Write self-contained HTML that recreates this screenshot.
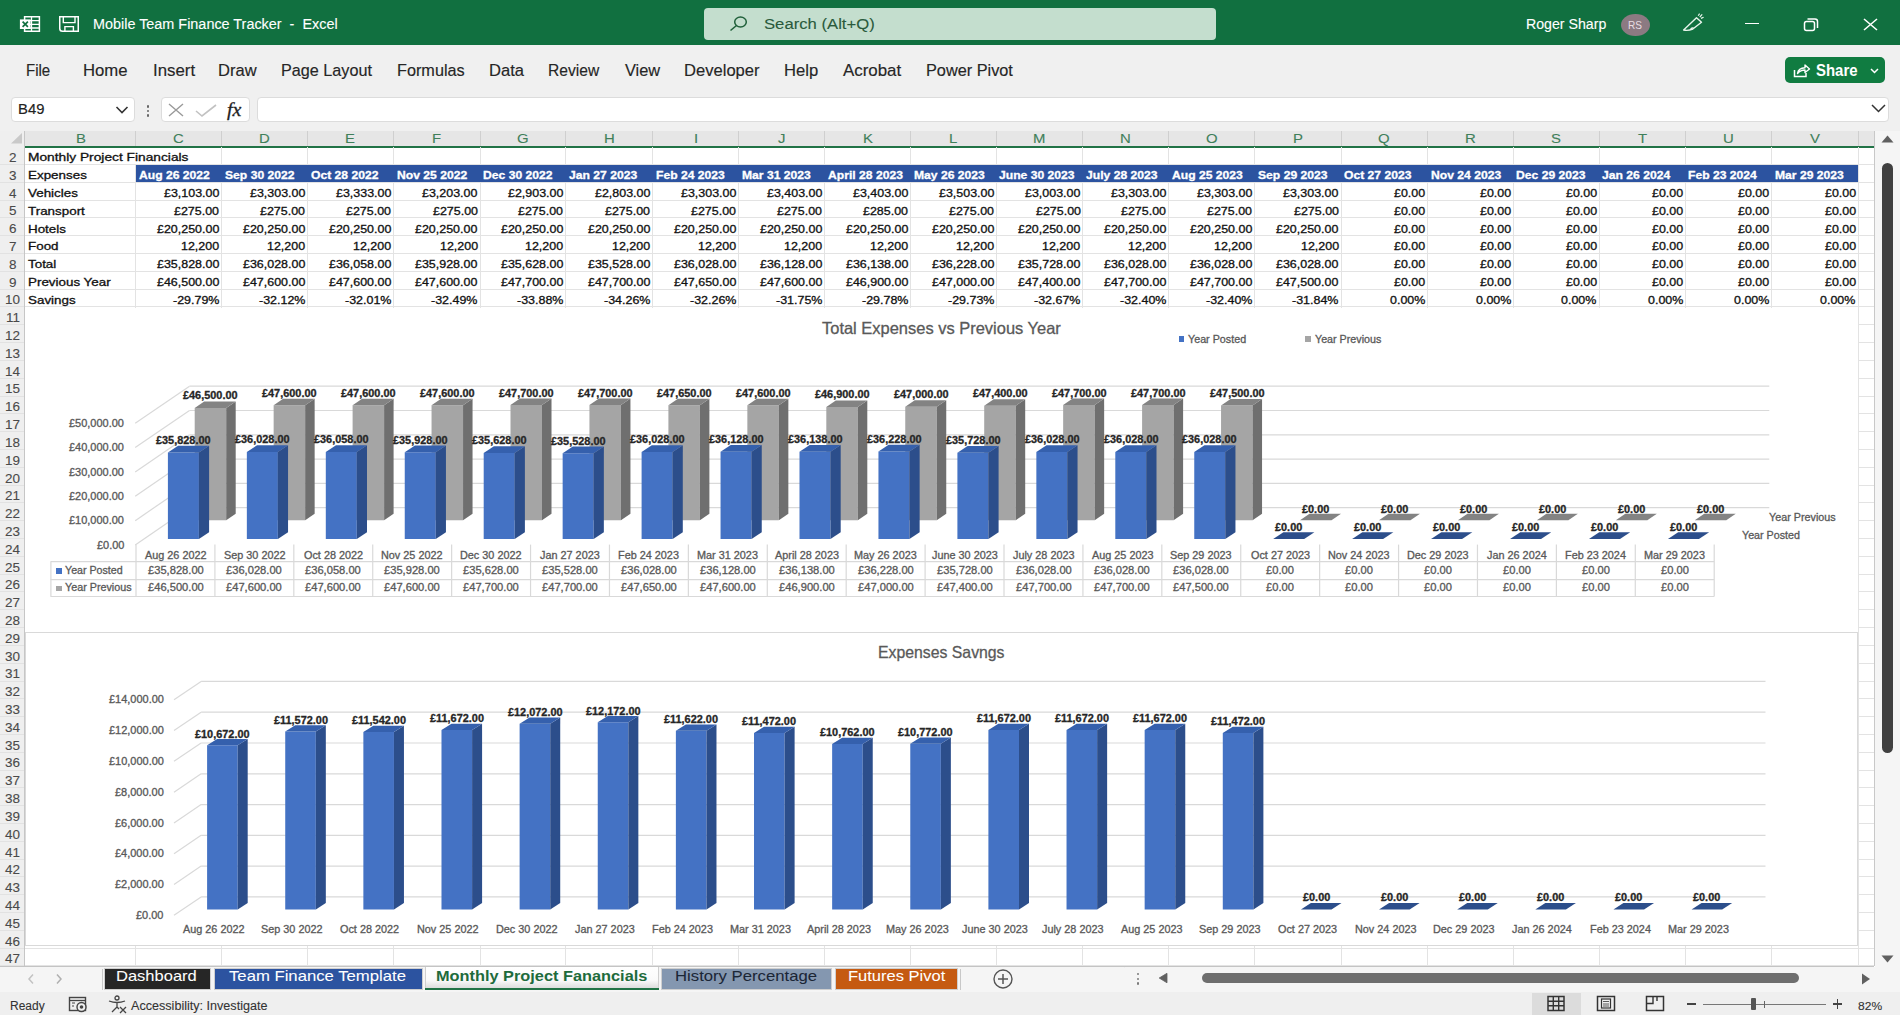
<!DOCTYPE html><html><head><meta charset="utf-8"><title>Excel</title><style>
html,body{margin:0;padding:0;width:1900px;height:1015px;overflow:hidden;background:#fff;position:relative}
body{font-family:"Liberation Sans",sans-serif}
.t{position:absolute;white-space:pre;line-height:1;transform-origin:0 0;-webkit-text-stroke:0.3px currentColor}
.r{position:absolute}
svg{position:absolute}
</style></head><body>
<div class="r" style="left:0.00px;top:0.00px;width:1900.00px;height:44.50px;background:#117040;"></div>
<svg style="left:18px;top:14px" width="24" height="20" viewBox="0 0 24 20">
<rect x="6.6" y="2.75" width="14.8" height="14.5" fill="none" stroke="#fff" stroke-width="1.5"/>
<path d="M13.5 2.75 V17.25 M6.6 6.6 H21.4 M6.6 10.4 H21.4 M6.6 14 H21.4" stroke="#fff" stroke-width="1.3"/>
<rect x="1.9" y="5.4" width="10.7" height="9.6" fill="#fff"/>
<path d="M4.6 7.6 L9.9 12.9 M9.9 7.6 L4.6 12.9" stroke="#117040" stroke-width="1.7"/>
</svg>
<svg style="left:57px;top:14px" width="24" height="20" viewBox="0 0 24 20">
<path d="M2.75 2.75 H21.25 V17.25 H5.5 Q2.75 17.25 2.75 14.5 Z" fill="none" stroke="#fff" stroke-width="1.5"/>
<path d="M6.3 2.75 V8.6 H18 V2.75" fill="none" stroke="#fff" stroke-width="1.4"/>
<path d="M7.9 17.25 V12.6 H16.4 V17.25" fill="none" stroke="#fff" stroke-width="1.4"/>
</svg>
<div class="t" style="left:93.40px;top:18.26px;font-size:13.81px;color:#fff;transform:scaleX(1.0437);-webkit-text-stroke:0.1px currentColor;">Mobile Team Finance Tracker  -  Excel</div>
<div class="r" style="left:703.60px;top:8.00px;width:512.00px;height:31.80px;background:#c4dece;border-radius:4px;"></div>
<svg style="left:728px;top:15px" width="22" height="18" viewBox="0 0 22 18">
<ellipse cx="12.5" cy="7" rx="5.8" ry="5" fill="none" stroke="#20603a" stroke-width="1.5"/>
<line x1="8.5" y1="10.5" x2="2.5" y2="15.5" stroke="#20603a" stroke-width="1.6"/></svg>
<div class="t" style="left:763.90px;top:16.03px;font-size:15.26px;color:#2a5a3c;transform:scaleX(1.0932);-webkit-text-stroke:0.1px currentColor;">Search (Alt+Q)</div>
<div class="t" style="left:1526.30px;top:18.36px;font-size:13.81px;color:#fff;transform:scaleX(1.0270);-webkit-text-stroke:0.1px currentColor;">Roger Sharp</div>
<div class="r" style="left:1620.5px;top:13.7px;width:29px;height:22.5px;border-radius:50%;background:#8c7a82"></div>
<div class="t" style="left:1628.00px;top:20.26px;font-size:11.34px;color:#e8dde2;transform:scaleX(0.8889);-webkit-text-stroke:0px currentColor;">RS</div>
<svg style="left:1680px;top:12px" width="26" height="22" viewBox="0 0 26 22">
<path d="M3.6 18 L16.5 5.8 L21.5 10.2 L12.8 17 Q8 19.2 3.6 18 Z" fill="none" stroke="#e8f5ec" stroke-width="1.4" stroke-linejoin="round"/>
<path d="M10.5 17.6 Q11.5 15.2 13.6 16.2" fill="none" stroke="#e8f5ec" stroke-width="1.3"/>
<path d="M18.2 3.8 L19.6 1.6 M21 6.4 L23.6 5.2 M19.8 5 L22.2 2.4" stroke="#e8f5ec" stroke-width="1.2"/>
</svg>
<div class="r" style="left:1745.00px;top:22.50px;width:13.50px;height:1.50px;background:#fff;"></div>
<svg style="left:1802px;top:17px" width="18" height="15" viewBox="0 0 18 15">
<rect x="2.5" y="4.5" width="10" height="9" rx="2" fill="none" stroke="#fff" stroke-width="1.5"/>
<path d="M5.5 2 H13 Q15.5 2 15.5 4.5 V11" fill="none" stroke="#fff" stroke-width="1.5"/></svg>
<svg style="left:1862px;top:18px" width="17" height="13" viewBox="0 0 17 13">
<path d="M2 1 L15 12 M15 1 L2 12" stroke="#fff" stroke-width="1.6"/></svg>
<div class="r" style="left:0.00px;top:44.50px;width:1900.00px;height:52.00px;background:#f0f0f0;"></div>
<div class="t" style="left:26.10px;top:63.21px;font-size:15.99px;color:#262626;transform:scaleX(0.9394);-webkit-text-stroke:0.15px currentColor;">File</div>
<div class="t" style="left:83.30px;top:63.21px;font-size:15.99px;color:#262626;transform:scaleX(1.0458);-webkit-text-stroke:0.15px currentColor;">Home</div>
<div class="t" style="left:152.60px;top:63.21px;font-size:15.99px;color:#262626;transform:scaleX(1.0529);-webkit-text-stroke:0.15px currentColor;">Insert</div>
<div class="t" style="left:218.00px;top:63.21px;font-size:15.99px;color:#262626;transform:scaleX(1.0346);-webkit-text-stroke:0.15px currentColor;">Draw</div>
<div class="t" style="left:281.40px;top:63.21px;font-size:15.99px;color:#262626;transform:scaleX(1.0125);-webkit-text-stroke:0.15px currentColor;">Page Layout</div>
<div class="t" style="left:397.00px;top:63.21px;font-size:15.99px;color:#262626;transform:scaleX(1.0161);-webkit-text-stroke:0.15px currentColor;">Formulas</div>
<div class="t" style="left:488.80px;top:63.21px;font-size:15.99px;color:#262626;transform:scaleX(1.0364);-webkit-text-stroke:0.15px currentColor;">Data</div>
<div class="t" style="left:548.40px;top:63.21px;font-size:15.99px;color:#262626;transform:scaleX(0.9767);-webkit-text-stroke:0.15px currentColor;">Review</div>
<div class="t" style="left:624.60px;top:63.21px;font-size:15.99px;color:#262626;transform:scaleX(1.0243);-webkit-text-stroke:0.15px currentColor;">View</div>
<div class="t" style="left:684.00px;top:63.21px;font-size:15.99px;color:#262626;transform:scaleX(1.0374);-webkit-text-stroke:0.15px currentColor;">Developer</div>
<div class="t" style="left:783.70px;top:63.21px;font-size:15.99px;color:#262626;transform:scaleX(1.0401);-webkit-text-stroke:0.15px currentColor;">Help</div>
<div class="t" style="left:842.60px;top:63.21px;font-size:15.99px;color:#262626;transform:scaleX(1.0563);-webkit-text-stroke:0.15px currentColor;">Acrobat</div>
<div class="t" style="left:925.60px;top:63.21px;font-size:15.99px;color:#262626;transform:scaleX(1.0187);-webkit-text-stroke:0.15px currentColor;">Power Pivot</div>
<div class="r" style="left:1785.10px;top:57.10px;width:100.10px;height:26.40px;background:#107c41;border-radius:5px;"></div>
<svg style="left:1793px;top:63px" width="18" height="15" viewBox="0 0 18 15">
<path d="M1.5 7 V13.5 H13 V10" fill="none" stroke="#fff" stroke-width="1.5"/>
<path d="M4.5 10.5 Q5.5 5 12 4.8 V2 L16.5 6 L12 9.5 V7 Q7.5 7 4.5 10.5 Z" fill="none" stroke="#fff" stroke-width="1.4" stroke-linejoin="round"/></svg>
<div class="t" style="left:1815.70px;top:63.01px;font-size:15.99px;font-weight:bold;color:#fff;transform:scaleX(0.9339);-webkit-text-stroke:0px currentColor;">Share</div>
<svg style="left:1869px;top:67px" width="11" height="8" viewBox="0 0 11 8"><path d="M2 2 L5.5 5.5 L9 2" fill="none" stroke="#fff" stroke-width="1.5"/></svg>
<div class="r" style="left:0.00px;top:96.50px;width:1900.00px;height:34.00px;background:#f0f0f0;"></div>
<div class="r" style="left:10.80px;top:96.80px;width:124.20px;height:25.60px;background:#fff;border:1px solid #dcdcdc;border-radius:4px;box-sizing:border-box;"></div>
<div class="t" style="left:17.60px;top:103.36px;font-size:13.81px;color:#222;transform:scaleX(1.0746);-webkit-text-stroke:0.15px currentColor;">B49</div>
<svg style="left:114px;top:104px" width="16" height="12" viewBox="0 0 16 12"><path d="M2.5 3 L8 8.5 L13.5 3" fill="none" stroke="#333" stroke-width="1.6"/></svg>
<div class="r" style="left:146.60px;top:105.00px;width:2.60px;height:2.60px;background:#666;border-radius:50%;"></div>
<div class="r" style="left:146.60px;top:109.50px;width:2.60px;height:2.60px;background:#666;border-radius:50%;"></div>
<div class="r" style="left:146.60px;top:114.00px;width:2.60px;height:2.60px;background:#666;border-radius:50%;"></div>
<div class="r" style="left:160.60px;top:96.80px;width:89.50px;height:25.60px;background:#fff;border:1px solid #dcdcdc;border-radius:4px;box-sizing:border-box;"></div>
<svg style="left:166px;top:102px" width="82" height="16" viewBox="0 0 82 16">
<path d="M3 2 L17 14 M17 2 L3 14" stroke="#9a9a9a" stroke-width="1.4"/>
<path d="M30 9 L36 14 L50 3" fill="none" stroke="#c2c2c2" stroke-width="1.6"/>
</svg>
<div class="t" style="left:227px;top:100px;font-family:'Liberation Serif',serif;font-style:italic;font-size:19px;color:#222;transform:scaleX(1.05)">fx</div>
<div class="r" style="left:257.20px;top:96.80px;width:1632.00px;height:25.60px;background:#fff;border:1px solid #dcdcdc;border-radius:4px;box-sizing:border-box;"></div>
<svg style="left:1870px;top:103px" width="17" height="11" viewBox="0 0 17 11"><path d="M2 2 L8.5 8.5 L15 2" fill="none" stroke="#333" stroke-width="1.5"/></svg>
<div class="r" style="left:25.30px;top:147.80px;width:1849.10px;height:818.20px;background:#fff;"></div>
<div class="r" style="left:0.00px;top:130.50px;width:1874.40px;height:16.00px;background:#e6e6e6;"></div>
<div class="r" style="left:0.00px;top:130.50px;width:25.30px;height:835.50px;background:#efefef;"></div>
<svg style="left:10px;top:132px" width="13" height="12" viewBox="0 0 13 12"><path d="M12 1 V11.5 H1 Z" fill="#c9c9c9"/></svg>
<div class="r" style="left:135.20px;top:130.50px;width:1.00px;height:16.00px;background:#cfcfcf;"></div>
<div class="t" style="left:75.53px;top:132.80px;font-size:12.94px;color:#3f7f5a;transform:scaleX(1.1531);-webkit-text-stroke:0.1px currentColor;">B</div>
<div class="r" style="left:221.10px;top:130.50px;width:1.00px;height:16.00px;background:#cfcfcf;"></div>
<div class="t" style="left:173.26px;top:132.80px;font-size:12.94px;color:#3f7f5a;transform:scaleX(1.1531);-webkit-text-stroke:0.1px currentColor;">C</div>
<div class="r" style="left:307.00px;top:130.50px;width:1.00px;height:16.00px;background:#cfcfcf;"></div>
<div class="t" style="left:259.16px;top:132.80px;font-size:12.94px;color:#3f7f5a;transform:scaleX(1.1531);-webkit-text-stroke:0.1px currentColor;">D</div>
<div class="r" style="left:392.90px;top:130.50px;width:1.00px;height:16.00px;background:#cfcfcf;"></div>
<div class="t" style="left:345.48px;top:132.80px;font-size:12.94px;color:#3f7f5a;transform:scaleX(1.1531);-webkit-text-stroke:0.1px currentColor;">E</div>
<div class="r" style="left:479.50px;top:130.50px;width:1.00px;height:16.00px;background:#cfcfcf;"></div>
<div class="t" style="left:432.14px;top:132.80px;font-size:12.94px;color:#3f7f5a;transform:scaleX(1.1531);-webkit-text-stroke:0.1px currentColor;">F</div>
<div class="r" style="left:565.30px;top:130.50px;width:1.00px;height:16.00px;background:#cfcfcf;"></div>
<div class="t" style="left:517.10px;top:132.80px;font-size:12.94px;color:#3f7f5a;transform:scaleX(1.1531);-webkit-text-stroke:0.1px currentColor;">G</div>
<div class="r" style="left:652.30px;top:130.50px;width:1.00px;height:16.00px;background:#cfcfcf;"></div>
<div class="t" style="left:603.91px;top:132.80px;font-size:12.94px;color:#3f7f5a;transform:scaleX(1.1531);-webkit-text-stroke:0.1px currentColor;">H</div>
<div class="r" style="left:738.20px;top:130.50px;width:1.00px;height:16.00px;background:#cfcfcf;"></div>
<div class="t" style="left:693.68px;top:132.80px;font-size:12.94px;color:#3f7f5a;transform:scaleX(1.1531);-webkit-text-stroke:0.1px currentColor;">I</div>
<div class="r" style="left:824.10px;top:130.50px;width:1.00px;height:16.00px;background:#cfcfcf;"></div>
<div class="t" style="left:777.92px;top:132.80px;font-size:12.94px;color:#3f7f5a;transform:scaleX(1.1531);-webkit-text-stroke:0.1px currentColor;">J</div>
<div class="r" style="left:910.00px;top:130.50px;width:1.00px;height:16.00px;background:#cfcfcf;"></div>
<div class="t" style="left:862.58px;top:132.80px;font-size:12.94px;color:#3f7f5a;transform:scaleX(1.1531);-webkit-text-stroke:0.1px currentColor;">K</div>
<div class="r" style="left:995.80px;top:130.50px;width:1.00px;height:16.00px;background:#cfcfcf;"></div>
<div class="t" style="left:949.25px;top:132.80px;font-size:12.94px;color:#3f7f5a;transform:scaleX(1.1531);-webkit-text-stroke:0.1px currentColor;">L</div>
<div class="r" style="left:1082.40px;top:130.50px;width:1.00px;height:16.00px;background:#cfcfcf;"></div>
<div class="t" style="left:1033.39px;top:132.80px;font-size:12.94px;color:#3f7f5a;transform:scaleX(1.1531);-webkit-text-stroke:0.1px currentColor;">M</div>
<div class="r" style="left:1168.30px;top:130.50px;width:1.00px;height:16.00px;background:#cfcfcf;"></div>
<div class="t" style="left:1120.46px;top:132.80px;font-size:12.94px;color:#3f7f5a;transform:scaleX(1.1531);-webkit-text-stroke:0.1px currentColor;">N</div>
<div class="r" style="left:1254.20px;top:130.50px;width:1.00px;height:16.00px;background:#cfcfcf;"></div>
<div class="t" style="left:1205.95px;top:132.80px;font-size:12.94px;color:#3f7f5a;transform:scaleX(1.1531);-webkit-text-stroke:0.1px currentColor;">O</div>
<div class="r" style="left:1340.50px;top:130.50px;width:1.00px;height:16.00px;background:#cfcfcf;"></div>
<div class="t" style="left:1292.88px;top:132.80px;font-size:12.94px;color:#3f7f5a;transform:scaleX(1.1531);-webkit-text-stroke:0.1px currentColor;">P</div>
<div class="r" style="left:1427.00px;top:130.50px;width:1.00px;height:16.00px;background:#cfcfcf;"></div>
<div class="t" style="left:1378.45px;top:132.80px;font-size:12.94px;color:#3f7f5a;transform:scaleX(1.1531);-webkit-text-stroke:0.1px currentColor;">Q</div>
<div class="r" style="left:1512.80px;top:130.50px;width:1.00px;height:16.00px;background:#cfcfcf;"></div>
<div class="t" style="left:1465.01px;top:132.80px;font-size:12.94px;color:#3f7f5a;transform:scaleX(1.1531);-webkit-text-stroke:0.1px currentColor;">R</div>
<div class="r" style="left:1598.50px;top:130.50px;width:1.00px;height:16.00px;background:#cfcfcf;"></div>
<div class="t" style="left:1551.18px;top:132.80px;font-size:12.94px;color:#3f7f5a;transform:scaleX(1.1531);-webkit-text-stroke:0.1px currentColor;">S</div>
<div class="r" style="left:1684.70px;top:130.50px;width:1.00px;height:16.00px;background:#cfcfcf;"></div>
<div class="t" style="left:1637.54px;top:132.80px;font-size:12.94px;color:#3f7f5a;transform:scaleX(1.1531);-webkit-text-stroke:0.1px currentColor;">T</div>
<div class="r" style="left:1771.20px;top:130.50px;width:1.00px;height:16.00px;background:#cfcfcf;"></div>
<div class="t" style="left:1723.06px;top:132.80px;font-size:12.94px;color:#3f7f5a;transform:scaleX(1.1531);-webkit-text-stroke:0.1px currentColor;">U</div>
<div class="r" style="left:1857.50px;top:130.50px;width:1.00px;height:16.00px;background:#cfcfcf;"></div>
<div class="t" style="left:1809.88px;top:132.80px;font-size:12.94px;color:#3f7f5a;transform:scaleX(1.1531);-webkit-text-stroke:0.1px currentColor;">V</div>
<div class="r" style="left:25.30px;top:146.00px;width:1849.10px;height:2.00px;background:#217346;"></div>
<div class="r" style="left:24.30px;top:130.50px;width:1.20px;height:835.50px;background:#c6c6c6;"></div>
<div class="r" style="left:0.00px;top:164.01px;width:24.30px;height:1.00px;background:#e2e2e2;"></div>
<div class="r" style="left:25.30px;top:164.01px;width:1849.10px;height:1.00px;background:#e3e3e3;"></div>
<div class="r" style="left:0.00px;top:181.82px;width:24.30px;height:1.00px;background:#e2e2e2;"></div>
<div class="r" style="left:25.30px;top:181.82px;width:1849.10px;height:1.00px;background:#e3e3e3;"></div>
<div class="r" style="left:0.00px;top:199.63px;width:24.30px;height:1.00px;background:#e2e2e2;"></div>
<div class="r" style="left:25.30px;top:199.63px;width:1849.10px;height:1.00px;background:#e3e3e3;"></div>
<div class="r" style="left:0.00px;top:217.44px;width:24.30px;height:1.00px;background:#e2e2e2;"></div>
<div class="r" style="left:25.30px;top:217.44px;width:1849.10px;height:1.00px;background:#e3e3e3;"></div>
<div class="r" style="left:0.00px;top:235.25px;width:24.30px;height:1.00px;background:#e2e2e2;"></div>
<div class="r" style="left:25.30px;top:235.25px;width:1849.10px;height:1.00px;background:#e3e3e3;"></div>
<div class="r" style="left:0.00px;top:253.06px;width:24.30px;height:1.00px;background:#e2e2e2;"></div>
<div class="r" style="left:25.30px;top:253.06px;width:1849.10px;height:1.00px;background:#e3e3e3;"></div>
<div class="r" style="left:0.00px;top:270.87px;width:24.30px;height:1.00px;background:#e2e2e2;"></div>
<div class="r" style="left:25.30px;top:270.87px;width:1849.10px;height:1.00px;background:#e3e3e3;"></div>
<div class="r" style="left:0.00px;top:288.68px;width:24.30px;height:1.00px;background:#e2e2e2;"></div>
<div class="r" style="left:25.30px;top:288.68px;width:1849.10px;height:1.00px;background:#e3e3e3;"></div>
<div class="r" style="left:0.00px;top:306.49px;width:24.30px;height:1.00px;background:#e2e2e2;"></div>
<div class="r" style="left:25.30px;top:306.49px;width:1849.10px;height:1.00px;background:#e3e3e3;"></div>
<div class="r" style="left:0.00px;top:324.30px;width:24.30px;height:1.00px;background:#e2e2e2;"></div>
<div class="r" style="left:25.30px;top:324.30px;width:1849.10px;height:1.00px;background:#e3e3e3;"></div>
<div class="r" style="left:0.00px;top:342.11px;width:24.30px;height:1.00px;background:#e2e2e2;"></div>
<div class="r" style="left:25.30px;top:342.11px;width:1849.10px;height:1.00px;background:#e3e3e3;"></div>
<div class="r" style="left:0.00px;top:359.92px;width:24.30px;height:1.00px;background:#e2e2e2;"></div>
<div class="r" style="left:25.30px;top:359.92px;width:1849.10px;height:1.00px;background:#e3e3e3;"></div>
<div class="r" style="left:0.00px;top:377.73px;width:24.30px;height:1.00px;background:#e2e2e2;"></div>
<div class="r" style="left:25.30px;top:377.73px;width:1849.10px;height:1.00px;background:#e3e3e3;"></div>
<div class="r" style="left:0.00px;top:395.54px;width:24.30px;height:1.00px;background:#e2e2e2;"></div>
<div class="r" style="left:25.30px;top:395.54px;width:1849.10px;height:1.00px;background:#e3e3e3;"></div>
<div class="r" style="left:0.00px;top:413.35px;width:24.30px;height:1.00px;background:#e2e2e2;"></div>
<div class="r" style="left:25.30px;top:413.35px;width:1849.10px;height:1.00px;background:#e3e3e3;"></div>
<div class="r" style="left:0.00px;top:431.16px;width:24.30px;height:1.00px;background:#e2e2e2;"></div>
<div class="r" style="left:25.30px;top:431.16px;width:1849.10px;height:1.00px;background:#e3e3e3;"></div>
<div class="r" style="left:0.00px;top:448.97px;width:24.30px;height:1.00px;background:#e2e2e2;"></div>
<div class="r" style="left:25.30px;top:448.97px;width:1849.10px;height:1.00px;background:#e3e3e3;"></div>
<div class="r" style="left:0.00px;top:466.78px;width:24.30px;height:1.00px;background:#e2e2e2;"></div>
<div class="r" style="left:25.30px;top:466.78px;width:1849.10px;height:1.00px;background:#e3e3e3;"></div>
<div class="r" style="left:0.00px;top:484.59px;width:24.30px;height:1.00px;background:#e2e2e2;"></div>
<div class="r" style="left:25.30px;top:484.59px;width:1849.10px;height:1.00px;background:#e3e3e3;"></div>
<div class="r" style="left:0.00px;top:502.40px;width:24.30px;height:1.00px;background:#e2e2e2;"></div>
<div class="r" style="left:25.30px;top:502.40px;width:1849.10px;height:1.00px;background:#e3e3e3;"></div>
<div class="r" style="left:0.00px;top:520.21px;width:24.30px;height:1.00px;background:#e2e2e2;"></div>
<div class="r" style="left:25.30px;top:520.21px;width:1849.10px;height:1.00px;background:#e3e3e3;"></div>
<div class="r" style="left:0.00px;top:538.02px;width:24.30px;height:1.00px;background:#e2e2e2;"></div>
<div class="r" style="left:25.30px;top:538.02px;width:1849.10px;height:1.00px;background:#e3e3e3;"></div>
<div class="r" style="left:0.00px;top:555.83px;width:24.30px;height:1.00px;background:#e2e2e2;"></div>
<div class="r" style="left:25.30px;top:555.83px;width:1849.10px;height:1.00px;background:#e3e3e3;"></div>
<div class="r" style="left:0.00px;top:573.64px;width:24.30px;height:1.00px;background:#e2e2e2;"></div>
<div class="r" style="left:25.30px;top:573.64px;width:1849.10px;height:1.00px;background:#e3e3e3;"></div>
<div class="r" style="left:0.00px;top:591.45px;width:24.30px;height:1.00px;background:#e2e2e2;"></div>
<div class="r" style="left:25.30px;top:591.45px;width:1849.10px;height:1.00px;background:#e3e3e3;"></div>
<div class="r" style="left:0.00px;top:609.26px;width:24.30px;height:1.00px;background:#e2e2e2;"></div>
<div class="r" style="left:25.30px;top:609.26px;width:1849.10px;height:1.00px;background:#e3e3e3;"></div>
<div class="r" style="left:0.00px;top:627.07px;width:24.30px;height:1.00px;background:#e2e2e2;"></div>
<div class="r" style="left:25.30px;top:627.07px;width:1849.10px;height:1.00px;background:#e3e3e3;"></div>
<div class="r" style="left:0.00px;top:644.88px;width:24.30px;height:1.00px;background:#e2e2e2;"></div>
<div class="r" style="left:25.30px;top:644.88px;width:1849.10px;height:1.00px;background:#e3e3e3;"></div>
<div class="r" style="left:0.00px;top:662.69px;width:24.30px;height:1.00px;background:#e2e2e2;"></div>
<div class="r" style="left:25.30px;top:662.69px;width:1849.10px;height:1.00px;background:#e3e3e3;"></div>
<div class="r" style="left:0.00px;top:680.50px;width:24.30px;height:1.00px;background:#e2e2e2;"></div>
<div class="r" style="left:25.30px;top:680.50px;width:1849.10px;height:1.00px;background:#e3e3e3;"></div>
<div class="r" style="left:0.00px;top:698.31px;width:24.30px;height:1.00px;background:#e2e2e2;"></div>
<div class="r" style="left:25.30px;top:698.31px;width:1849.10px;height:1.00px;background:#e3e3e3;"></div>
<div class="r" style="left:0.00px;top:716.12px;width:24.30px;height:1.00px;background:#e2e2e2;"></div>
<div class="r" style="left:25.30px;top:716.12px;width:1849.10px;height:1.00px;background:#e3e3e3;"></div>
<div class="r" style="left:0.00px;top:733.93px;width:24.30px;height:1.00px;background:#e2e2e2;"></div>
<div class="r" style="left:25.30px;top:733.93px;width:1849.10px;height:1.00px;background:#e3e3e3;"></div>
<div class="r" style="left:0.00px;top:751.74px;width:24.30px;height:1.00px;background:#e2e2e2;"></div>
<div class="r" style="left:25.30px;top:751.74px;width:1849.10px;height:1.00px;background:#e3e3e3;"></div>
<div class="r" style="left:0.00px;top:769.55px;width:24.30px;height:1.00px;background:#e2e2e2;"></div>
<div class="r" style="left:25.30px;top:769.55px;width:1849.10px;height:1.00px;background:#e3e3e3;"></div>
<div class="r" style="left:0.00px;top:787.36px;width:24.30px;height:1.00px;background:#e2e2e2;"></div>
<div class="r" style="left:25.30px;top:787.36px;width:1849.10px;height:1.00px;background:#e3e3e3;"></div>
<div class="r" style="left:0.00px;top:805.17px;width:24.30px;height:1.00px;background:#e2e2e2;"></div>
<div class="r" style="left:25.30px;top:805.17px;width:1849.10px;height:1.00px;background:#e3e3e3;"></div>
<div class="r" style="left:0.00px;top:822.98px;width:24.30px;height:1.00px;background:#e2e2e2;"></div>
<div class="r" style="left:25.30px;top:822.98px;width:1849.10px;height:1.00px;background:#e3e3e3;"></div>
<div class="r" style="left:0.00px;top:840.79px;width:24.30px;height:1.00px;background:#e2e2e2;"></div>
<div class="r" style="left:25.30px;top:840.79px;width:1849.10px;height:1.00px;background:#e3e3e3;"></div>
<div class="r" style="left:0.00px;top:858.60px;width:24.30px;height:1.00px;background:#e2e2e2;"></div>
<div class="r" style="left:25.30px;top:858.60px;width:1849.10px;height:1.00px;background:#e3e3e3;"></div>
<div class="r" style="left:0.00px;top:876.41px;width:24.30px;height:1.00px;background:#e2e2e2;"></div>
<div class="r" style="left:25.30px;top:876.41px;width:1849.10px;height:1.00px;background:#e3e3e3;"></div>
<div class="r" style="left:0.00px;top:894.22px;width:24.30px;height:1.00px;background:#e2e2e2;"></div>
<div class="r" style="left:25.30px;top:894.22px;width:1849.10px;height:1.00px;background:#e3e3e3;"></div>
<div class="r" style="left:0.00px;top:912.03px;width:24.30px;height:1.00px;background:#e2e2e2;"></div>
<div class="r" style="left:25.30px;top:912.03px;width:1849.10px;height:1.00px;background:#e3e3e3;"></div>
<div class="r" style="left:0.00px;top:929.84px;width:24.30px;height:1.00px;background:#e2e2e2;"></div>
<div class="r" style="left:25.30px;top:929.84px;width:1849.10px;height:1.00px;background:#e3e3e3;"></div>
<div class="r" style="left:0.00px;top:947.65px;width:24.30px;height:1.00px;background:#e2e2e2;"></div>
<div class="r" style="left:25.30px;top:947.65px;width:1849.10px;height:1.00px;background:#e3e3e3;"></div>
<div class="r" style="left:0.00px;top:965.46px;width:24.30px;height:1.00px;background:#e2e2e2;"></div>
<div class="r" style="left:25.30px;top:965.46px;width:1849.10px;height:1.00px;background:#e3e3e3;"></div>
<div class="r" style="left:135.20px;top:164.51px;width:1.00px;height:801.49px;background:#e3e3e3;"></div>
<div class="r" style="left:221.10px;top:146.70px;width:1.00px;height:819.30px;background:#e3e3e3;"></div>
<div class="r" style="left:307.00px;top:146.70px;width:1.00px;height:819.30px;background:#e3e3e3;"></div>
<div class="r" style="left:392.90px;top:146.70px;width:1.00px;height:819.30px;background:#e3e3e3;"></div>
<div class="r" style="left:479.50px;top:146.70px;width:1.00px;height:819.30px;background:#e3e3e3;"></div>
<div class="r" style="left:565.30px;top:146.70px;width:1.00px;height:819.30px;background:#e3e3e3;"></div>
<div class="r" style="left:652.30px;top:146.70px;width:1.00px;height:819.30px;background:#e3e3e3;"></div>
<div class="r" style="left:738.20px;top:146.70px;width:1.00px;height:819.30px;background:#e3e3e3;"></div>
<div class="r" style="left:824.10px;top:146.70px;width:1.00px;height:819.30px;background:#e3e3e3;"></div>
<div class="r" style="left:910.00px;top:146.70px;width:1.00px;height:819.30px;background:#e3e3e3;"></div>
<div class="r" style="left:995.80px;top:146.70px;width:1.00px;height:819.30px;background:#e3e3e3;"></div>
<div class="r" style="left:1082.40px;top:146.70px;width:1.00px;height:819.30px;background:#e3e3e3;"></div>
<div class="r" style="left:1168.30px;top:146.70px;width:1.00px;height:819.30px;background:#e3e3e3;"></div>
<div class="r" style="left:1254.20px;top:146.70px;width:1.00px;height:819.30px;background:#e3e3e3;"></div>
<div class="r" style="left:1340.50px;top:146.70px;width:1.00px;height:819.30px;background:#e3e3e3;"></div>
<div class="r" style="left:1427.00px;top:146.70px;width:1.00px;height:819.30px;background:#e3e3e3;"></div>
<div class="r" style="left:1512.80px;top:146.70px;width:1.00px;height:819.30px;background:#e3e3e3;"></div>
<div class="r" style="left:1598.50px;top:146.70px;width:1.00px;height:819.30px;background:#e3e3e3;"></div>
<div class="r" style="left:1684.70px;top:146.70px;width:1.00px;height:819.30px;background:#e3e3e3;"></div>
<div class="r" style="left:1771.20px;top:146.70px;width:1.00px;height:819.30px;background:#e3e3e3;"></div>
<div class="r" style="left:1857.50px;top:146.70px;width:1.00px;height:819.30px;background:#e3e3e3;"></div>
<div class="r" style="left:1873.90px;top:146.70px;width:1.00px;height:819.30px;background:#e3e3e3;"></div>
<div class="r" style="left:1873.80px;top:130.50px;width:1.20px;height:835.50px;background:#c8c8c8;"></div>
<div class="r" style="left:0.00px;top:965.50px;width:1874.40px;height:1.00px;background:#c4c4c4;"></div>
<div class="t" style="left:8.85px;top:151.92px;font-size:12.21px;color:#4a4a4a;transform:scaleX(1.1050);-webkit-text-stroke:0.1px currentColor;">2</div>
<div class="t" style="left:8.85px;top:169.73px;font-size:12.21px;color:#4a4a4a;transform:scaleX(1.1050);-webkit-text-stroke:0.1px currentColor;">3</div>
<div class="t" style="left:8.85px;top:187.54px;font-size:12.21px;color:#4a4a4a;transform:scaleX(1.1050);-webkit-text-stroke:0.1px currentColor;">4</div>
<div class="t" style="left:8.85px;top:205.35px;font-size:12.21px;color:#4a4a4a;transform:scaleX(1.1050);-webkit-text-stroke:0.1px currentColor;">5</div>
<div class="t" style="left:8.85px;top:223.16px;font-size:12.21px;color:#4a4a4a;transform:scaleX(1.1050);-webkit-text-stroke:0.1px currentColor;">6</div>
<div class="t" style="left:8.85px;top:240.97px;font-size:12.21px;color:#4a4a4a;transform:scaleX(1.1050);-webkit-text-stroke:0.1px currentColor;">7</div>
<div class="t" style="left:8.85px;top:258.78px;font-size:12.21px;color:#4a4a4a;transform:scaleX(1.1050);-webkit-text-stroke:0.1px currentColor;">8</div>
<div class="t" style="left:8.85px;top:276.59px;font-size:12.21px;color:#4a4a4a;transform:scaleX(1.1050);-webkit-text-stroke:0.1px currentColor;">9</div>
<div class="t" style="left:5.10px;top:294.40px;font-size:12.21px;color:#4a4a4a;transform:scaleX(1.1050);-webkit-text-stroke:0.1px currentColor;">10</div>
<div class="t" style="left:5.60px;top:312.21px;font-size:12.21px;color:#4a4a4a;transform:scaleX(1.1050);-webkit-text-stroke:0.1px currentColor;">11</div>
<div class="t" style="left:5.10px;top:330.02px;font-size:12.21px;color:#4a4a4a;transform:scaleX(1.1050);-webkit-text-stroke:0.1px currentColor;">12</div>
<div class="t" style="left:5.10px;top:347.83px;font-size:12.21px;color:#4a4a4a;transform:scaleX(1.1050);-webkit-text-stroke:0.1px currentColor;">13</div>
<div class="t" style="left:5.10px;top:365.64px;font-size:12.21px;color:#4a4a4a;transform:scaleX(1.1050);-webkit-text-stroke:0.1px currentColor;">14</div>
<div class="t" style="left:5.10px;top:383.45px;font-size:12.21px;color:#4a4a4a;transform:scaleX(1.1050);-webkit-text-stroke:0.1px currentColor;">15</div>
<div class="t" style="left:5.10px;top:401.26px;font-size:12.21px;color:#4a4a4a;transform:scaleX(1.1050);-webkit-text-stroke:0.1px currentColor;">16</div>
<div class="t" style="left:5.10px;top:419.07px;font-size:12.21px;color:#4a4a4a;transform:scaleX(1.1050);-webkit-text-stroke:0.1px currentColor;">17</div>
<div class="t" style="left:5.10px;top:436.88px;font-size:12.21px;color:#4a4a4a;transform:scaleX(1.1050);-webkit-text-stroke:0.1px currentColor;">18</div>
<div class="t" style="left:5.10px;top:454.69px;font-size:12.21px;color:#4a4a4a;transform:scaleX(1.1050);-webkit-text-stroke:0.1px currentColor;">19</div>
<div class="t" style="left:5.10px;top:472.50px;font-size:12.21px;color:#4a4a4a;transform:scaleX(1.1050);-webkit-text-stroke:0.1px currentColor;">20</div>
<div class="t" style="left:5.10px;top:490.31px;font-size:12.21px;color:#4a4a4a;transform:scaleX(1.1050);-webkit-text-stroke:0.1px currentColor;">21</div>
<div class="t" style="left:5.10px;top:508.12px;font-size:12.21px;color:#4a4a4a;transform:scaleX(1.1050);-webkit-text-stroke:0.1px currentColor;">22</div>
<div class="t" style="left:5.10px;top:525.93px;font-size:12.21px;color:#4a4a4a;transform:scaleX(1.1050);-webkit-text-stroke:0.1px currentColor;">23</div>
<div class="t" style="left:5.10px;top:543.74px;font-size:12.21px;color:#4a4a4a;transform:scaleX(1.1050);-webkit-text-stroke:0.1px currentColor;">24</div>
<div class="t" style="left:5.10px;top:561.55px;font-size:12.21px;color:#4a4a4a;transform:scaleX(1.1050);-webkit-text-stroke:0.1px currentColor;">25</div>
<div class="t" style="left:5.10px;top:579.36px;font-size:12.21px;color:#4a4a4a;transform:scaleX(1.1050);-webkit-text-stroke:0.1px currentColor;">26</div>
<div class="t" style="left:5.10px;top:597.17px;font-size:12.21px;color:#4a4a4a;transform:scaleX(1.1050);-webkit-text-stroke:0.1px currentColor;">27</div>
<div class="t" style="left:5.10px;top:614.98px;font-size:12.21px;color:#4a4a4a;transform:scaleX(1.1050);-webkit-text-stroke:0.1px currentColor;">28</div>
<div class="t" style="left:5.10px;top:632.79px;font-size:12.21px;color:#4a4a4a;transform:scaleX(1.1050);-webkit-text-stroke:0.1px currentColor;">29</div>
<div class="t" style="left:5.10px;top:650.60px;font-size:12.21px;color:#4a4a4a;transform:scaleX(1.1050);-webkit-text-stroke:0.1px currentColor;">30</div>
<div class="t" style="left:5.10px;top:668.41px;font-size:12.21px;color:#4a4a4a;transform:scaleX(1.1050);-webkit-text-stroke:0.1px currentColor;">31</div>
<div class="t" style="left:5.10px;top:686.22px;font-size:12.21px;color:#4a4a4a;transform:scaleX(1.1050);-webkit-text-stroke:0.1px currentColor;">32</div>
<div class="t" style="left:5.10px;top:704.03px;font-size:12.21px;color:#4a4a4a;transform:scaleX(1.1050);-webkit-text-stroke:0.1px currentColor;">33</div>
<div class="t" style="left:5.10px;top:721.84px;font-size:12.21px;color:#4a4a4a;transform:scaleX(1.1050);-webkit-text-stroke:0.1px currentColor;">34</div>
<div class="t" style="left:5.10px;top:739.65px;font-size:12.21px;color:#4a4a4a;transform:scaleX(1.1050);-webkit-text-stroke:0.1px currentColor;">35</div>
<div class="t" style="left:5.10px;top:757.46px;font-size:12.21px;color:#4a4a4a;transform:scaleX(1.1050);-webkit-text-stroke:0.1px currentColor;">36</div>
<div class="t" style="left:5.10px;top:775.27px;font-size:12.21px;color:#4a4a4a;transform:scaleX(1.1050);-webkit-text-stroke:0.1px currentColor;">37</div>
<div class="t" style="left:5.10px;top:793.08px;font-size:12.21px;color:#4a4a4a;transform:scaleX(1.1050);-webkit-text-stroke:0.1px currentColor;">38</div>
<div class="t" style="left:5.10px;top:810.89px;font-size:12.21px;color:#4a4a4a;transform:scaleX(1.1050);-webkit-text-stroke:0.1px currentColor;">39</div>
<div class="t" style="left:5.10px;top:828.70px;font-size:12.21px;color:#4a4a4a;transform:scaleX(1.1050);-webkit-text-stroke:0.1px currentColor;">40</div>
<div class="t" style="left:5.10px;top:846.51px;font-size:12.21px;color:#4a4a4a;transform:scaleX(1.1050);-webkit-text-stroke:0.1px currentColor;">41</div>
<div class="t" style="left:5.10px;top:864.32px;font-size:12.21px;color:#4a4a4a;transform:scaleX(1.1050);-webkit-text-stroke:0.1px currentColor;">42</div>
<div class="t" style="left:5.10px;top:882.13px;font-size:12.21px;color:#4a4a4a;transform:scaleX(1.1050);-webkit-text-stroke:0.1px currentColor;">43</div>
<div class="t" style="left:5.10px;top:899.94px;font-size:12.21px;color:#4a4a4a;transform:scaleX(1.1050);-webkit-text-stroke:0.1px currentColor;">44</div>
<div class="t" style="left:5.10px;top:917.75px;font-size:12.21px;color:#4a4a4a;transform:scaleX(1.1050);-webkit-text-stroke:0.1px currentColor;">45</div>
<div class="t" style="left:5.10px;top:935.56px;font-size:12.21px;color:#4a4a4a;transform:scaleX(1.1050);-webkit-text-stroke:0.1px currentColor;">46</div>
<div class="t" style="left:5.10px;top:953.37px;font-size:12.21px;color:#4a4a4a;transform:scaleX(1.1050);-webkit-text-stroke:0.1px currentColor;">47</div>
<div class="t" style="left:28.30px;top:152.43px;font-size:10.90px;color:#111;transform:scaleX(1.2623);">Monthly Project Financials</div>
<div class="r" style="left:135.70px;top:164.51px;width:1722.30px;height:17.81px;background:#2c53a0;"></div>
<div class="t" style="left:138.80px;top:170.24px;font-size:10.90px;font-weight:bold;color:#fff;transform:scaleX(1.1146);">Aug 26 2022</div>
<div class="t" style="left:224.70px;top:170.24px;font-size:10.90px;font-weight:bold;color:#fff;transform:scaleX(1.1146);">Sep 30 2022</div>
<div class="t" style="left:310.60px;top:170.24px;font-size:10.90px;font-weight:bold;color:#fff;transform:scaleX(1.1146);">Oct 28 2022</div>
<div class="t" style="left:396.50px;top:170.24px;font-size:10.90px;font-weight:bold;color:#fff;transform:scaleX(1.1146);">Nov 25 2022</div>
<div class="t" style="left:483.10px;top:170.24px;font-size:10.90px;font-weight:bold;color:#fff;transform:scaleX(1.1146);">Dec 30 2022</div>
<div class="t" style="left:568.90px;top:170.24px;font-size:10.90px;font-weight:bold;color:#fff;transform:scaleX(1.1146);">Jan 27 2023</div>
<div class="t" style="left:655.90px;top:170.24px;font-size:10.90px;font-weight:bold;color:#fff;transform:scaleX(1.1146);">Feb 24 2023</div>
<div class="t" style="left:741.80px;top:170.24px;font-size:10.90px;font-weight:bold;color:#fff;transform:scaleX(1.1146);">Mar 31 2023</div>
<div class="t" style="left:827.70px;top:170.24px;font-size:10.90px;font-weight:bold;color:#fff;transform:scaleX(1.1146);">April 28 2023</div>
<div class="t" style="left:913.60px;top:170.24px;font-size:10.90px;font-weight:bold;color:#fff;transform:scaleX(1.1146);">May 26 2023</div>
<div class="t" style="left:999.40px;top:170.24px;font-size:10.90px;font-weight:bold;color:#fff;transform:scaleX(1.1146);">June 30 2023</div>
<div class="t" style="left:1086.00px;top:170.24px;font-size:10.90px;font-weight:bold;color:#fff;transform:scaleX(1.1146);">July 28 2023</div>
<div class="t" style="left:1171.90px;top:170.24px;font-size:10.90px;font-weight:bold;color:#fff;transform:scaleX(1.1146);">Aug 25 2023</div>
<div class="t" style="left:1257.80px;top:170.24px;font-size:10.90px;font-weight:bold;color:#fff;transform:scaleX(1.1146);">Sep 29 2023</div>
<div class="t" style="left:1344.10px;top:170.24px;font-size:10.90px;font-weight:bold;color:#fff;transform:scaleX(1.1146);">Oct 27 2023</div>
<div class="t" style="left:1430.60px;top:170.24px;font-size:10.90px;font-weight:bold;color:#fff;transform:scaleX(1.1146);">Nov 24 2023</div>
<div class="t" style="left:1516.40px;top:170.24px;font-size:10.90px;font-weight:bold;color:#fff;transform:scaleX(1.1146);">Dec 29 2023</div>
<div class="t" style="left:1602.10px;top:170.24px;font-size:10.90px;font-weight:bold;color:#fff;transform:scaleX(1.1146);">Jan 26 2024</div>
<div class="t" style="left:1688.30px;top:170.24px;font-size:10.90px;font-weight:bold;color:#fff;transform:scaleX(1.1146);">Feb 23 2024</div>
<div class="t" style="left:1774.80px;top:170.24px;font-size:10.90px;font-weight:bold;color:#fff;transform:scaleX(1.1146);">Mar 29 2023</div>
<div class="t" style="left:28.30px;top:170.24px;font-size:10.90px;color:#111;transform:scaleX(1.2299);">Expenses</div>
<div class="t" style="left:28.30px;top:188.05px;font-size:10.90px;color:#111;transform:scaleX(1.2299);">Vehicles</div>
<div class="t" style="left:28.30px;top:205.86px;font-size:10.90px;color:#111;transform:scaleX(1.2299);">Transport</div>
<div class="t" style="left:28.30px;top:223.67px;font-size:10.90px;color:#111;transform:scaleX(1.2299);">Hotels</div>
<div class="t" style="left:28.30px;top:241.48px;font-size:10.90px;color:#111;transform:scaleX(1.2299);">Food</div>
<div class="t" style="left:28.30px;top:259.29px;font-size:10.90px;color:#111;transform:scaleX(1.2299);">Total</div>
<div class="t" style="left:28.30px;top:277.10px;font-size:10.90px;color:#111;transform:scaleX(1.2299);">Previous Year</div>
<div class="t" style="left:28.30px;top:294.91px;font-size:10.90px;color:#111;transform:scaleX(1.2299);">Savings</div>
<div class="t" style="left:163.85px;top:188.05px;font-size:10.90px;color:#111;transform:scaleX(1.1435);">£3,103.00</div>
<div class="t" style="left:249.75px;top:188.05px;font-size:10.90px;color:#111;transform:scaleX(1.1435);">£3,303.00</div>
<div class="t" style="left:335.65px;top:188.05px;font-size:10.90px;color:#111;transform:scaleX(1.1435);">£3,333.00</div>
<div class="t" style="left:422.25px;top:188.05px;font-size:10.90px;color:#111;transform:scaleX(1.1435);">£3,203.00</div>
<div class="t" style="left:508.05px;top:188.05px;font-size:10.90px;color:#111;transform:scaleX(1.1435);">£2,903.00</div>
<div class="t" style="left:595.05px;top:188.05px;font-size:10.90px;color:#111;transform:scaleX(1.1435);">£2,803.00</div>
<div class="t" style="left:680.95px;top:188.05px;font-size:10.90px;color:#111;transform:scaleX(1.1435);">£3,303.00</div>
<div class="t" style="left:766.85px;top:188.05px;font-size:10.90px;color:#111;transform:scaleX(1.1435);">£3,403.00</div>
<div class="t" style="left:852.75px;top:188.05px;font-size:10.90px;color:#111;transform:scaleX(1.1435);">£3,403.00</div>
<div class="t" style="left:938.55px;top:188.05px;font-size:10.90px;color:#111;transform:scaleX(1.1435);">£3,503.00</div>
<div class="t" style="left:1025.15px;top:188.05px;font-size:10.90px;color:#111;transform:scaleX(1.1435);">£3,003.00</div>
<div class="t" style="left:1111.05px;top:188.05px;font-size:10.90px;color:#111;transform:scaleX(1.1435);">£3,303.00</div>
<div class="t" style="left:1196.95px;top:188.05px;font-size:10.90px;color:#111;transform:scaleX(1.1435);">£3,303.00</div>
<div class="t" style="left:1283.25px;top:188.05px;font-size:10.90px;color:#111;transform:scaleX(1.1435);">£3,303.00</div>
<div class="t" style="left:1394.01px;top:188.05px;font-size:10.90px;color:#111;transform:scaleX(1.1435);">£0.00</div>
<div class="t" style="left:1479.81px;top:188.05px;font-size:10.90px;color:#111;transform:scaleX(1.1435);">£0.00</div>
<div class="t" style="left:1565.51px;top:188.05px;font-size:10.90px;color:#111;transform:scaleX(1.1435);">£0.00</div>
<div class="t" style="left:1651.71px;top:188.05px;font-size:10.90px;color:#111;transform:scaleX(1.1435);">£0.00</div>
<div class="t" style="left:1738.21px;top:188.05px;font-size:10.90px;color:#111;transform:scaleX(1.1435);">£0.00</div>
<div class="t" style="left:1824.51px;top:188.05px;font-size:10.90px;color:#111;transform:scaleX(1.1435);">£0.00</div>
<div class="t" style="left:174.25px;top:205.86px;font-size:10.90px;color:#111;transform:scaleX(1.1435);">£275.00</div>
<div class="t" style="left:260.15px;top:205.86px;font-size:10.90px;color:#111;transform:scaleX(1.1435);">£275.00</div>
<div class="t" style="left:346.05px;top:205.86px;font-size:10.90px;color:#111;transform:scaleX(1.1435);">£275.00</div>
<div class="t" style="left:432.65px;top:205.86px;font-size:10.90px;color:#111;transform:scaleX(1.1435);">£275.00</div>
<div class="t" style="left:518.45px;top:205.86px;font-size:10.90px;color:#111;transform:scaleX(1.1435);">£275.00</div>
<div class="t" style="left:605.45px;top:205.86px;font-size:10.90px;color:#111;transform:scaleX(1.1435);">£275.00</div>
<div class="t" style="left:691.35px;top:205.86px;font-size:10.90px;color:#111;transform:scaleX(1.1435);">£275.00</div>
<div class="t" style="left:777.25px;top:205.86px;font-size:10.90px;color:#111;transform:scaleX(1.1435);">£275.00</div>
<div class="t" style="left:863.15px;top:205.86px;font-size:10.90px;color:#111;transform:scaleX(1.1435);">£285.00</div>
<div class="t" style="left:948.95px;top:205.86px;font-size:10.90px;color:#111;transform:scaleX(1.1435);">£275.00</div>
<div class="t" style="left:1035.55px;top:205.86px;font-size:10.90px;color:#111;transform:scaleX(1.1435);">£275.00</div>
<div class="t" style="left:1121.45px;top:205.86px;font-size:10.90px;color:#111;transform:scaleX(1.1435);">£275.00</div>
<div class="t" style="left:1207.35px;top:205.86px;font-size:10.90px;color:#111;transform:scaleX(1.1435);">£275.00</div>
<div class="t" style="left:1293.65px;top:205.86px;font-size:10.90px;color:#111;transform:scaleX(1.1435);">£275.00</div>
<div class="t" style="left:1394.01px;top:205.86px;font-size:10.90px;color:#111;transform:scaleX(1.1435);">£0.00</div>
<div class="t" style="left:1479.81px;top:205.86px;font-size:10.90px;color:#111;transform:scaleX(1.1435);">£0.00</div>
<div class="t" style="left:1565.51px;top:205.86px;font-size:10.90px;color:#111;transform:scaleX(1.1435);">£0.00</div>
<div class="t" style="left:1651.71px;top:205.86px;font-size:10.90px;color:#111;transform:scaleX(1.1435);">£0.00</div>
<div class="t" style="left:1738.21px;top:205.86px;font-size:10.90px;color:#111;transform:scaleX(1.1435);">£0.00</div>
<div class="t" style="left:1824.51px;top:205.86px;font-size:10.90px;color:#111;transform:scaleX(1.1435);">£0.00</div>
<div class="t" style="left:156.92px;top:223.67px;font-size:10.90px;color:#111;transform:scaleX(1.1435);">£20,250.00</div>
<div class="t" style="left:242.82px;top:223.67px;font-size:10.90px;color:#111;transform:scaleX(1.1435);">£20,250.00</div>
<div class="t" style="left:328.72px;top:223.67px;font-size:10.90px;color:#111;transform:scaleX(1.1435);">£20,250.00</div>
<div class="t" style="left:415.32px;top:223.67px;font-size:10.90px;color:#111;transform:scaleX(1.1435);">£20,250.00</div>
<div class="t" style="left:501.12px;top:223.67px;font-size:10.90px;color:#111;transform:scaleX(1.1435);">£20,250.00</div>
<div class="t" style="left:588.12px;top:223.67px;font-size:10.90px;color:#111;transform:scaleX(1.1435);">£20,250.00</div>
<div class="t" style="left:674.02px;top:223.67px;font-size:10.90px;color:#111;transform:scaleX(1.1435);">£20,250.00</div>
<div class="t" style="left:759.92px;top:223.67px;font-size:10.90px;color:#111;transform:scaleX(1.1435);">£20,250.00</div>
<div class="t" style="left:845.82px;top:223.67px;font-size:10.90px;color:#111;transform:scaleX(1.1435);">£20,250.00</div>
<div class="t" style="left:931.62px;top:223.67px;font-size:10.90px;color:#111;transform:scaleX(1.1435);">£20,250.00</div>
<div class="t" style="left:1018.22px;top:223.67px;font-size:10.90px;color:#111;transform:scaleX(1.1435);">£20,250.00</div>
<div class="t" style="left:1104.12px;top:223.67px;font-size:10.90px;color:#111;transform:scaleX(1.1435);">£20,250.00</div>
<div class="t" style="left:1190.02px;top:223.67px;font-size:10.90px;color:#111;transform:scaleX(1.1435);">£20,250.00</div>
<div class="t" style="left:1276.32px;top:223.67px;font-size:10.90px;color:#111;transform:scaleX(1.1435);">£20,250.00</div>
<div class="t" style="left:1394.01px;top:223.67px;font-size:10.90px;color:#111;transform:scaleX(1.1435);">£0.00</div>
<div class="t" style="left:1479.81px;top:223.67px;font-size:10.90px;color:#111;transform:scaleX(1.1435);">£0.00</div>
<div class="t" style="left:1565.51px;top:223.67px;font-size:10.90px;color:#111;transform:scaleX(1.1435);">£0.00</div>
<div class="t" style="left:1651.71px;top:223.67px;font-size:10.90px;color:#111;transform:scaleX(1.1435);">£0.00</div>
<div class="t" style="left:1738.21px;top:223.67px;font-size:10.90px;color:#111;transform:scaleX(1.1435);">£0.00</div>
<div class="t" style="left:1824.51px;top:223.67px;font-size:10.90px;color:#111;transform:scaleX(1.1435);">£0.00</div>
<div class="t" style="left:181.18px;top:241.48px;font-size:10.90px;color:#111;transform:scaleX(1.1435);">12,200</div>
<div class="t" style="left:267.08px;top:241.48px;font-size:10.90px;color:#111;transform:scaleX(1.1435);">12,200</div>
<div class="t" style="left:352.98px;top:241.48px;font-size:10.90px;color:#111;transform:scaleX(1.1435);">12,200</div>
<div class="t" style="left:439.58px;top:241.48px;font-size:10.90px;color:#111;transform:scaleX(1.1435);">12,200</div>
<div class="t" style="left:525.38px;top:241.48px;font-size:10.90px;color:#111;transform:scaleX(1.1435);">12,200</div>
<div class="t" style="left:612.38px;top:241.48px;font-size:10.90px;color:#111;transform:scaleX(1.1435);">12,200</div>
<div class="t" style="left:698.28px;top:241.48px;font-size:10.90px;color:#111;transform:scaleX(1.1435);">12,200</div>
<div class="t" style="left:784.18px;top:241.48px;font-size:10.90px;color:#111;transform:scaleX(1.1435);">12,200</div>
<div class="t" style="left:870.08px;top:241.48px;font-size:10.90px;color:#111;transform:scaleX(1.1435);">12,200</div>
<div class="t" style="left:955.88px;top:241.48px;font-size:10.90px;color:#111;transform:scaleX(1.1435);">12,200</div>
<div class="t" style="left:1042.48px;top:241.48px;font-size:10.90px;color:#111;transform:scaleX(1.1435);">12,200</div>
<div class="t" style="left:1128.38px;top:241.48px;font-size:10.90px;color:#111;transform:scaleX(1.1435);">12,200</div>
<div class="t" style="left:1214.28px;top:241.48px;font-size:10.90px;color:#111;transform:scaleX(1.1435);">12,200</div>
<div class="t" style="left:1300.58px;top:241.48px;font-size:10.90px;color:#111;transform:scaleX(1.1435);">12,200</div>
<div class="t" style="left:1394.01px;top:241.48px;font-size:10.90px;color:#111;transform:scaleX(1.1435);">£0.00</div>
<div class="t" style="left:1479.81px;top:241.48px;font-size:10.90px;color:#111;transform:scaleX(1.1435);">£0.00</div>
<div class="t" style="left:1565.51px;top:241.48px;font-size:10.90px;color:#111;transform:scaleX(1.1435);">£0.00</div>
<div class="t" style="left:1651.71px;top:241.48px;font-size:10.90px;color:#111;transform:scaleX(1.1435);">£0.00</div>
<div class="t" style="left:1738.21px;top:241.48px;font-size:10.90px;color:#111;transform:scaleX(1.1435);">£0.00</div>
<div class="t" style="left:1824.51px;top:241.48px;font-size:10.90px;color:#111;transform:scaleX(1.1435);">£0.00</div>
<div class="t" style="left:156.92px;top:259.29px;font-size:10.90px;color:#111;transform:scaleX(1.1435);">£35,828.00</div>
<div class="t" style="left:242.82px;top:259.29px;font-size:10.90px;color:#111;transform:scaleX(1.1435);">£36,028.00</div>
<div class="t" style="left:328.72px;top:259.29px;font-size:10.90px;color:#111;transform:scaleX(1.1435);">£36,058.00</div>
<div class="t" style="left:415.32px;top:259.29px;font-size:10.90px;color:#111;transform:scaleX(1.1435);">£35,928.00</div>
<div class="t" style="left:501.12px;top:259.29px;font-size:10.90px;color:#111;transform:scaleX(1.1435);">£35,628.00</div>
<div class="t" style="left:588.12px;top:259.29px;font-size:10.90px;color:#111;transform:scaleX(1.1435);">£35,528.00</div>
<div class="t" style="left:674.02px;top:259.29px;font-size:10.90px;color:#111;transform:scaleX(1.1435);">£36,028.00</div>
<div class="t" style="left:759.92px;top:259.29px;font-size:10.90px;color:#111;transform:scaleX(1.1435);">£36,128.00</div>
<div class="t" style="left:845.82px;top:259.29px;font-size:10.90px;color:#111;transform:scaleX(1.1435);">£36,138.00</div>
<div class="t" style="left:931.62px;top:259.29px;font-size:10.90px;color:#111;transform:scaleX(1.1435);">£36,228.00</div>
<div class="t" style="left:1018.22px;top:259.29px;font-size:10.90px;color:#111;transform:scaleX(1.1435);">£35,728.00</div>
<div class="t" style="left:1104.12px;top:259.29px;font-size:10.90px;color:#111;transform:scaleX(1.1435);">£36,028.00</div>
<div class="t" style="left:1190.02px;top:259.29px;font-size:10.90px;color:#111;transform:scaleX(1.1435);">£36,028.00</div>
<div class="t" style="left:1276.32px;top:259.29px;font-size:10.90px;color:#111;transform:scaleX(1.1435);">£36,028.00</div>
<div class="t" style="left:1394.01px;top:259.29px;font-size:10.90px;color:#111;transform:scaleX(1.1435);">£0.00</div>
<div class="t" style="left:1479.81px;top:259.29px;font-size:10.90px;color:#111;transform:scaleX(1.1435);">£0.00</div>
<div class="t" style="left:1565.51px;top:259.29px;font-size:10.90px;color:#111;transform:scaleX(1.1435);">£0.00</div>
<div class="t" style="left:1651.71px;top:259.29px;font-size:10.90px;color:#111;transform:scaleX(1.1435);">£0.00</div>
<div class="t" style="left:1738.21px;top:259.29px;font-size:10.90px;color:#111;transform:scaleX(1.1435);">£0.00</div>
<div class="t" style="left:1824.51px;top:259.29px;font-size:10.90px;color:#111;transform:scaleX(1.1435);">£0.00</div>
<div class="t" style="left:156.92px;top:277.10px;font-size:10.90px;color:#111;transform:scaleX(1.1435);">£46,500.00</div>
<div class="t" style="left:242.82px;top:277.10px;font-size:10.90px;color:#111;transform:scaleX(1.1435);">£47,600.00</div>
<div class="t" style="left:328.72px;top:277.10px;font-size:10.90px;color:#111;transform:scaleX(1.1435);">£47,600.00</div>
<div class="t" style="left:415.32px;top:277.10px;font-size:10.90px;color:#111;transform:scaleX(1.1435);">£47,600.00</div>
<div class="t" style="left:501.12px;top:277.10px;font-size:10.90px;color:#111;transform:scaleX(1.1435);">£47,700.00</div>
<div class="t" style="left:588.12px;top:277.10px;font-size:10.90px;color:#111;transform:scaleX(1.1435);">£47,700.00</div>
<div class="t" style="left:674.02px;top:277.10px;font-size:10.90px;color:#111;transform:scaleX(1.1435);">£47,650.00</div>
<div class="t" style="left:759.92px;top:277.10px;font-size:10.90px;color:#111;transform:scaleX(1.1435);">£47,600.00</div>
<div class="t" style="left:845.82px;top:277.10px;font-size:10.90px;color:#111;transform:scaleX(1.1435);">£46,900.00</div>
<div class="t" style="left:931.62px;top:277.10px;font-size:10.90px;color:#111;transform:scaleX(1.1435);">£47,000.00</div>
<div class="t" style="left:1018.22px;top:277.10px;font-size:10.90px;color:#111;transform:scaleX(1.1435);">£47,400.00</div>
<div class="t" style="left:1104.12px;top:277.10px;font-size:10.90px;color:#111;transform:scaleX(1.1435);">£47,700.00</div>
<div class="t" style="left:1190.02px;top:277.10px;font-size:10.90px;color:#111;transform:scaleX(1.1435);">£47,700.00</div>
<div class="t" style="left:1276.32px;top:277.10px;font-size:10.90px;color:#111;transform:scaleX(1.1435);">£47,500.00</div>
<div class="t" style="left:1394.01px;top:277.10px;font-size:10.90px;color:#111;transform:scaleX(1.1435);">£0.00</div>
<div class="t" style="left:1479.81px;top:277.10px;font-size:10.90px;color:#111;transform:scaleX(1.1435);">£0.00</div>
<div class="t" style="left:1565.51px;top:277.10px;font-size:10.90px;color:#111;transform:scaleX(1.1435);">£0.00</div>
<div class="t" style="left:1651.71px;top:277.10px;font-size:10.90px;color:#111;transform:scaleX(1.1435);">£0.00</div>
<div class="t" style="left:1738.21px;top:277.10px;font-size:10.90px;color:#111;transform:scaleX(1.1435);">£0.00</div>
<div class="t" style="left:1824.51px;top:277.10px;font-size:10.90px;color:#111;transform:scaleX(1.1435);">£0.00</div>
<div class="t" style="left:172.88px;top:294.91px;font-size:10.90px;color:#111;transform:scaleX(1.1435);">-29.79%</div>
<div class="t" style="left:258.78px;top:294.91px;font-size:10.90px;color:#111;transform:scaleX(1.1435);">-32.12%</div>
<div class="t" style="left:344.68px;top:294.91px;font-size:10.90px;color:#111;transform:scaleX(1.1435);">-32.01%</div>
<div class="t" style="left:431.28px;top:294.91px;font-size:10.90px;color:#111;transform:scaleX(1.1435);">-32.49%</div>
<div class="t" style="left:517.08px;top:294.91px;font-size:10.90px;color:#111;transform:scaleX(1.1435);">-33.88%</div>
<div class="t" style="left:604.08px;top:294.91px;font-size:10.90px;color:#111;transform:scaleX(1.1435);">-34.26%</div>
<div class="t" style="left:689.98px;top:294.91px;font-size:10.90px;color:#111;transform:scaleX(1.1435);">-32.26%</div>
<div class="t" style="left:775.88px;top:294.91px;font-size:10.90px;color:#111;transform:scaleX(1.1435);">-31.75%</div>
<div class="t" style="left:861.78px;top:294.91px;font-size:10.90px;color:#111;transform:scaleX(1.1435);">-29.78%</div>
<div class="t" style="left:947.58px;top:294.91px;font-size:10.90px;color:#111;transform:scaleX(1.1435);">-29.73%</div>
<div class="t" style="left:1034.18px;top:294.91px;font-size:10.90px;color:#111;transform:scaleX(1.1435);">-32.67%</div>
<div class="t" style="left:1120.08px;top:294.91px;font-size:10.90px;color:#111;transform:scaleX(1.1435);">-32.40%</div>
<div class="t" style="left:1205.98px;top:294.91px;font-size:10.90px;color:#111;transform:scaleX(1.1435);">-32.40%</div>
<div class="t" style="left:1292.28px;top:294.91px;font-size:10.90px;color:#111;transform:scaleX(1.1435);">-31.84%</div>
<div class="t" style="left:1389.86px;top:294.91px;font-size:10.90px;color:#111;transform:scaleX(1.1435);">0.00%</div>
<div class="t" style="left:1475.66px;top:294.91px;font-size:10.90px;color:#111;transform:scaleX(1.1435);">0.00%</div>
<div class="t" style="left:1561.36px;top:294.91px;font-size:10.90px;color:#111;transform:scaleX(1.1435);">0.00%</div>
<div class="t" style="left:1647.56px;top:294.91px;font-size:10.90px;color:#111;transform:scaleX(1.1435);">0.00%</div>
<div class="t" style="left:1734.06px;top:294.91px;font-size:10.90px;color:#111;transform:scaleX(1.1435);">0.00%</div>
<div class="t" style="left:1820.36px;top:294.91px;font-size:10.90px;color:#111;transform:scaleX(1.1435);">0.00%</div>
<div class="r" style="left:25.30px;top:307.80px;width:1832.70px;height:324.60px;background:#fff;"></div>
<div class="r" style="left:25.30px;top:632.40px;width:1832.70px;height:313.50px;background:#fff;border:1.2px solid #d9d9d9;box-sizing:border-box;"></div>
<svg style="left:0;top:0" width="1900" height="1015" viewBox="0 0 1900 1015"><line x1="189.50" y1="507.70" x2="1769.30" y2="507.70" stroke="#d9d9d9" stroke-width="1.2"/><line x1="135.20" y1="545.00" x2="189.50" y2="507.70" stroke="#d9d9d9" stroke-width="1.2"/><line x1="189.50" y1="483.40" x2="1769.30" y2="483.40" stroke="#d9d9d9" stroke-width="1.2"/><line x1="135.20" y1="520.64" x2="189.50" y2="483.40" stroke="#d9d9d9" stroke-width="1.2"/><line x1="189.50" y1="459.10" x2="1769.30" y2="459.10" stroke="#d9d9d9" stroke-width="1.2"/><line x1="135.20" y1="496.28" x2="189.50" y2="459.10" stroke="#d9d9d9" stroke-width="1.2"/><line x1="189.50" y1="434.80" x2="1769.30" y2="434.80" stroke="#d9d9d9" stroke-width="1.2"/><line x1="135.20" y1="471.92" x2="189.50" y2="434.80" stroke="#d9d9d9" stroke-width="1.2"/><line x1="189.50" y1="410.50" x2="1769.30" y2="410.50" stroke="#d9d9d9" stroke-width="1.2"/><line x1="135.20" y1="447.56" x2="189.50" y2="410.50" stroke="#d9d9d9" stroke-width="1.2"/><line x1="189.50" y1="386.20" x2="1769.30" y2="386.20" stroke="#d9d9d9" stroke-width="1.2"/><line x1="135.20" y1="423.20" x2="189.50" y2="386.20" stroke="#d9d9d9" stroke-width="1.2"/><line x1="50.50" y1="561.70" x2="1714.20" y2="561.70" stroke="#d9d9d9" stroke-width="1.2"/><line x1="50.50" y1="579.60" x2="1714.20" y2="579.60" stroke="#d9d9d9" stroke-width="1.2"/><line x1="50.50" y1="596.50" x2="1714.20" y2="596.50" stroke="#d9d9d9" stroke-width="1.2"/><line x1="50.90" y1="561.70" x2="50.90" y2="596.50" stroke="#d9d9d9" stroke-width="1.2"/><line x1="136.00" y1="544.60" x2="136.00" y2="596.50" stroke="#d9d9d9" stroke-width="1.2"/><line x1="214.91" y1="544.60" x2="214.91" y2="596.50" stroke="#d9d9d9" stroke-width="1.2"/><line x1="293.82" y1="544.60" x2="293.82" y2="596.50" stroke="#d9d9d9" stroke-width="1.2"/><line x1="372.73" y1="544.60" x2="372.73" y2="596.50" stroke="#d9d9d9" stroke-width="1.2"/><line x1="451.64" y1="544.60" x2="451.64" y2="596.50" stroke="#d9d9d9" stroke-width="1.2"/><line x1="530.55" y1="544.60" x2="530.55" y2="596.50" stroke="#d9d9d9" stroke-width="1.2"/><line x1="609.46" y1="544.60" x2="609.46" y2="596.50" stroke="#d9d9d9" stroke-width="1.2"/><line x1="688.37" y1="544.60" x2="688.37" y2="596.50" stroke="#d9d9d9" stroke-width="1.2"/><line x1="767.28" y1="544.60" x2="767.28" y2="596.50" stroke="#d9d9d9" stroke-width="1.2"/><line x1="846.19" y1="544.60" x2="846.19" y2="596.50" stroke="#d9d9d9" stroke-width="1.2"/><line x1="925.10" y1="544.60" x2="925.10" y2="596.50" stroke="#d9d9d9" stroke-width="1.2"/><line x1="1004.01" y1="544.60" x2="1004.01" y2="596.50" stroke="#d9d9d9" stroke-width="1.2"/><line x1="1082.92" y1="544.60" x2="1082.92" y2="596.50" stroke="#d9d9d9" stroke-width="1.2"/><line x1="1161.83" y1="544.60" x2="1161.83" y2="596.50" stroke="#d9d9d9" stroke-width="1.2"/><line x1="1240.74" y1="544.60" x2="1240.74" y2="596.50" stroke="#d9d9d9" stroke-width="1.2"/><line x1="1319.65" y1="544.60" x2="1319.65" y2="596.50" stroke="#d9d9d9" stroke-width="1.2"/><line x1="1398.56" y1="544.60" x2="1398.56" y2="596.50" stroke="#d9d9d9" stroke-width="1.2"/><line x1="1477.47" y1="544.60" x2="1477.47" y2="596.50" stroke="#d9d9d9" stroke-width="1.2"/><line x1="1556.38" y1="544.60" x2="1556.38" y2="596.50" stroke="#d9d9d9" stroke-width="1.2"/><line x1="1635.29" y1="544.60" x2="1635.29" y2="596.50" stroke="#d9d9d9" stroke-width="1.2"/><line x1="1714.20" y1="544.60" x2="1714.20" y2="596.50" stroke="#d9d9d9" stroke-width="1.2"/><polygon points="194.70,520.20 226.20,520.20 226.20,408.00 194.70,408.00" fill="#a5a5a5"/><polygon points="226.20,520.20 235.70,513.70 235.70,401.50 226.20,408.00" fill="#6f6f6f"/><polygon points="194.70,408.00 226.20,408.00 235.70,401.50 204.20,401.50" fill="#838383"/><polygon points="273.65,520.20 305.15,520.20 305.15,405.34 273.65,405.34" fill="#a5a5a5"/><polygon points="305.15,520.20 314.65,513.70 314.65,398.84 305.15,405.34" fill="#6f6f6f"/><polygon points="273.65,405.34 305.15,405.34 314.65,398.84 283.15,398.84" fill="#838383"/><polygon points="352.60,520.20 384.10,520.20 384.10,405.34 352.60,405.34" fill="#a5a5a5"/><polygon points="384.10,520.20 393.60,513.70 393.60,398.84 384.10,405.34" fill="#6f6f6f"/><polygon points="352.60,405.34 384.10,405.34 393.60,398.84 362.10,398.84" fill="#838383"/><polygon points="431.55,520.20 463.05,520.20 463.05,405.34 431.55,405.34" fill="#a5a5a5"/><polygon points="463.05,520.20 472.55,513.70 472.55,398.84 463.05,405.34" fill="#6f6f6f"/><polygon points="431.55,405.34 463.05,405.34 472.55,398.84 441.05,398.84" fill="#838383"/><polygon points="510.50,520.20 542.00,520.20 542.00,405.10 510.50,405.10" fill="#a5a5a5"/><polygon points="542.00,520.20 551.50,513.70 551.50,398.60 542.00,405.10" fill="#6f6f6f"/><polygon points="510.50,405.10 542.00,405.10 551.50,398.60 520.00,398.60" fill="#838383"/><polygon points="589.45,520.20 620.95,520.20 620.95,405.10 589.45,405.10" fill="#a5a5a5"/><polygon points="620.95,520.20 630.45,513.70 630.45,398.60 620.95,405.10" fill="#6f6f6f"/><polygon points="589.45,405.10 620.95,405.10 630.45,398.60 598.95,398.60" fill="#838383"/><polygon points="668.40,520.20 699.90,520.20 699.90,405.22 668.40,405.22" fill="#a5a5a5"/><polygon points="699.90,520.20 709.40,513.70 709.40,398.72 699.90,405.22" fill="#6f6f6f"/><polygon points="668.40,405.22 699.90,405.22 709.40,398.72 677.90,398.72" fill="#838383"/><polygon points="747.35,520.20 778.85,520.20 778.85,405.34 747.35,405.34" fill="#a5a5a5"/><polygon points="778.85,520.20 788.35,513.70 788.35,398.84 778.85,405.34" fill="#6f6f6f"/><polygon points="747.35,405.34 778.85,405.34 788.35,398.84 756.85,398.84" fill="#838383"/><polygon points="826.30,520.20 857.80,520.20 857.80,407.03 826.30,407.03" fill="#a5a5a5"/><polygon points="857.80,520.20 867.30,513.70 867.30,400.53 857.80,407.03" fill="#6f6f6f"/><polygon points="826.30,407.03 857.80,407.03 867.30,400.53 835.80,400.53" fill="#838383"/><polygon points="905.25,520.20 936.75,520.20 936.75,406.79 905.25,406.79" fill="#a5a5a5"/><polygon points="936.75,520.20 946.25,513.70 946.25,400.29 936.75,406.79" fill="#6f6f6f"/><polygon points="905.25,406.79 936.75,406.79 946.25,400.29 914.75,400.29" fill="#838383"/><polygon points="984.20,520.20 1015.70,520.20 1015.70,405.82 984.20,405.82" fill="#a5a5a5"/><polygon points="1015.70,520.20 1025.20,513.70 1025.20,399.32 1015.70,405.82" fill="#6f6f6f"/><polygon points="984.20,405.82 1015.70,405.82 1025.20,399.32 993.70,399.32" fill="#838383"/><polygon points="1063.15,520.20 1094.65,520.20 1094.65,405.10 1063.15,405.10" fill="#a5a5a5"/><polygon points="1094.65,520.20 1104.15,513.70 1104.15,398.60 1094.65,405.10" fill="#6f6f6f"/><polygon points="1063.15,405.10 1094.65,405.10 1104.15,398.60 1072.65,398.60" fill="#838383"/><polygon points="1142.10,520.20 1173.60,520.20 1173.60,405.10 1142.10,405.10" fill="#a5a5a5"/><polygon points="1173.60,520.20 1183.10,513.70 1183.10,398.60 1173.60,405.10" fill="#6f6f6f"/><polygon points="1142.10,405.10 1173.60,405.10 1183.10,398.60 1151.60,398.60" fill="#838383"/><polygon points="1221.05,520.20 1252.55,520.20 1252.55,405.58 1221.05,405.58" fill="#a5a5a5"/><polygon points="1252.55,520.20 1262.05,513.70 1262.05,399.08 1252.55,405.58" fill="#6f6f6f"/><polygon points="1221.05,405.58 1252.55,405.58 1262.05,399.08 1230.55,399.08" fill="#838383"/><polygon points="1300.00,520.20 1331.50,520.20 1341.00,513.70 1309.50,513.70" fill="#838383"/><polygon points="1378.95,520.20 1410.45,520.20 1419.95,513.70 1388.45,513.70" fill="#838383"/><polygon points="1457.90,520.20 1489.40,520.20 1498.90,513.70 1467.40,513.70" fill="#838383"/><polygon points="1536.85,520.20 1568.35,520.20 1577.85,513.70 1546.35,513.70" fill="#838383"/><polygon points="1615.80,520.20 1647.30,520.20 1656.80,513.70 1625.30,513.70" fill="#838383"/><polygon points="1694.75,520.20 1726.25,520.20 1735.75,513.70 1704.25,513.70" fill="#838383"/><polygon points="167.90,539.00 198.90,539.00 198.90,452.55 167.90,452.55" fill="#4472c4"/><polygon points="198.90,539.00 209.10,532.20 209.10,445.75 198.90,452.55" fill="#2c4e8b"/><polygon points="167.90,452.55 198.90,452.55 209.10,445.75 178.10,445.75" fill="#3560ad"/><polygon points="246.85,539.00 277.85,539.00 277.85,452.06 246.85,452.06" fill="#4472c4"/><polygon points="277.85,539.00 288.05,532.20 288.05,445.26 277.85,452.06" fill="#2c4e8b"/><polygon points="246.85,452.06 277.85,452.06 288.05,445.26 257.05,445.26" fill="#3560ad"/><polygon points="325.80,539.00 356.80,539.00 356.80,451.99 325.80,451.99" fill="#4472c4"/><polygon points="356.80,539.00 367.00,532.20 367.00,445.19 356.80,451.99" fill="#2c4e8b"/><polygon points="325.80,451.99 356.80,451.99 367.00,445.19 336.00,445.19" fill="#3560ad"/><polygon points="404.75,539.00 435.75,539.00 435.75,452.31 404.75,452.31" fill="#4472c4"/><polygon points="435.75,539.00 445.95,532.20 445.95,445.51 435.75,452.31" fill="#2c4e8b"/><polygon points="404.75,452.31 435.75,452.31 445.95,445.51 414.95,445.51" fill="#3560ad"/><polygon points="483.70,539.00 514.70,539.00 514.70,453.03 483.70,453.03" fill="#4472c4"/><polygon points="514.70,539.00 524.90,532.20 524.90,446.23 514.70,453.03" fill="#2c4e8b"/><polygon points="483.70,453.03 514.70,453.03 524.90,446.23 493.90,446.23" fill="#3560ad"/><polygon points="562.65,539.00 593.65,539.00 593.65,453.27 562.65,453.27" fill="#4472c4"/><polygon points="593.65,539.00 603.85,532.20 603.85,446.47 593.65,453.27" fill="#2c4e8b"/><polygon points="562.65,453.27 593.65,453.27 603.85,446.47 572.85,446.47" fill="#3560ad"/><polygon points="641.60,539.00 672.60,539.00 672.60,452.06 641.60,452.06" fill="#4472c4"/><polygon points="672.60,539.00 682.80,532.20 682.80,445.26 672.60,452.06" fill="#2c4e8b"/><polygon points="641.60,452.06 672.60,452.06 682.80,445.26 651.80,445.26" fill="#3560ad"/><polygon points="720.55,539.00 751.55,539.00 751.55,451.82 720.55,451.82" fill="#4472c4"/><polygon points="751.55,539.00 761.75,532.20 761.75,445.02 751.55,451.82" fill="#2c4e8b"/><polygon points="720.55,451.82 751.55,451.82 761.75,445.02 730.75,445.02" fill="#3560ad"/><polygon points="799.50,539.00 830.50,539.00 830.50,451.80 799.50,451.80" fill="#4472c4"/><polygon points="830.50,539.00 840.70,532.20 840.70,445.00 830.50,451.80" fill="#2c4e8b"/><polygon points="799.50,451.80 830.50,451.80 840.70,445.00 809.70,445.00" fill="#3560ad"/><polygon points="878.45,539.00 909.45,539.00 909.45,451.58 878.45,451.58" fill="#4472c4"/><polygon points="909.45,539.00 919.65,532.20 919.65,444.78 909.45,451.58" fill="#2c4e8b"/><polygon points="878.45,451.58 909.45,451.58 919.65,444.78 888.65,444.78" fill="#3560ad"/><polygon points="957.40,539.00 988.40,539.00 988.40,452.79 957.40,452.79" fill="#4472c4"/><polygon points="988.40,539.00 998.60,532.20 998.60,445.99 988.40,452.79" fill="#2c4e8b"/><polygon points="957.40,452.79 988.40,452.79 998.60,445.99 967.60,445.99" fill="#3560ad"/><polygon points="1036.35,539.00 1067.35,539.00 1067.35,452.06 1036.35,452.06" fill="#4472c4"/><polygon points="1067.35,539.00 1077.55,532.20 1077.55,445.26 1067.35,452.06" fill="#2c4e8b"/><polygon points="1036.35,452.06 1067.35,452.06 1077.55,445.26 1046.55,445.26" fill="#3560ad"/><polygon points="1115.30,539.00 1146.30,539.00 1146.30,452.06 1115.30,452.06" fill="#4472c4"/><polygon points="1146.30,539.00 1156.50,532.20 1156.50,445.26 1146.30,452.06" fill="#2c4e8b"/><polygon points="1115.30,452.06 1146.30,452.06 1156.50,445.26 1125.50,445.26" fill="#3560ad"/><polygon points="1194.25,539.00 1225.25,539.00 1225.25,452.06 1194.25,452.06" fill="#4472c4"/><polygon points="1225.25,539.00 1235.45,532.20 1235.45,445.26 1225.25,452.06" fill="#2c4e8b"/><polygon points="1194.25,452.06 1225.25,452.06 1235.45,445.26 1204.45,445.26" fill="#3560ad"/><polygon points="1273.20,539.00 1304.20,539.00 1314.40,532.20 1283.40,532.20" fill="#2c4e8b"/><polygon points="1352.15,539.00 1383.15,539.00 1393.35,532.20 1362.35,532.20" fill="#2c4e8b"/><polygon points="1431.10,539.00 1462.10,539.00 1472.30,532.20 1441.30,532.20" fill="#2c4e8b"/><polygon points="1510.05,539.00 1541.05,539.00 1551.25,532.20 1520.25,532.20" fill="#2c4e8b"/><polygon points="1589.00,539.00 1620.00,539.00 1630.20,532.20 1599.20,532.20" fill="#2c4e8b"/><polygon points="1667.95,539.00 1698.95,539.00 1709.15,532.20 1678.15,532.20" fill="#2c4e8b"/><line x1="201.10" y1="896.90" x2="1765.50" y2="896.90" stroke="#d9d9d9" stroke-width="1.2"/><line x1="174.00" y1="915.30" x2="201.10" y2="896.90" stroke="#d9d9d9" stroke-width="1.2"/><line x1="201.10" y1="866.12" x2="1765.50" y2="866.12" stroke="#d9d9d9" stroke-width="1.2"/><line x1="174.00" y1="884.51" x2="201.10" y2="866.12" stroke="#d9d9d9" stroke-width="1.2"/><line x1="201.10" y1="835.34" x2="1765.50" y2="835.34" stroke="#d9d9d9" stroke-width="1.2"/><line x1="174.00" y1="853.72" x2="201.10" y2="835.34" stroke="#d9d9d9" stroke-width="1.2"/><line x1="201.10" y1="804.56" x2="1765.50" y2="804.56" stroke="#d9d9d9" stroke-width="1.2"/><line x1="174.00" y1="822.93" x2="201.10" y2="804.56" stroke="#d9d9d9" stroke-width="1.2"/><line x1="201.10" y1="773.78" x2="1765.50" y2="773.78" stroke="#d9d9d9" stroke-width="1.2"/><line x1="174.00" y1="792.14" x2="201.10" y2="773.78" stroke="#d9d9d9" stroke-width="1.2"/><line x1="201.10" y1="743.00" x2="1765.50" y2="743.00" stroke="#d9d9d9" stroke-width="1.2"/><line x1="174.00" y1="761.35" x2="201.10" y2="743.00" stroke="#d9d9d9" stroke-width="1.2"/><line x1="201.10" y1="712.22" x2="1765.50" y2="712.22" stroke="#d9d9d9" stroke-width="1.2"/><line x1="174.00" y1="730.56" x2="201.10" y2="712.22" stroke="#d9d9d9" stroke-width="1.2"/><line x1="201.10" y1="681.44" x2="1765.50" y2="681.44" stroke="#d9d9d9" stroke-width="1.2"/><line x1="174.00" y1="699.77" x2="201.10" y2="681.44" stroke="#d9d9d9" stroke-width="1.2"/><polygon points="207.10,909.40 237.70,909.40 237.70,745.37 207.10,745.37" fill="#4472c4"/><polygon points="237.70,909.40 247.70,903.10 247.70,739.07 237.70,745.37" fill="#2c4e8b"/><polygon points="207.10,745.37 237.70,745.37 247.70,739.07 217.10,739.07" fill="#3560ad"/><polygon points="285.23,909.40 315.83,909.40 315.83,731.54 285.23,731.54" fill="#4472c4"/><polygon points="315.83,909.40 325.83,903.10 325.83,725.24 315.83,731.54" fill="#2c4e8b"/><polygon points="285.23,731.54 315.83,731.54 325.83,725.24 295.23,725.24" fill="#3560ad"/><polygon points="363.36,909.40 393.96,909.40 393.96,732.00 363.36,732.00" fill="#4472c4"/><polygon points="393.96,909.40 403.96,903.10 403.96,725.70 393.96,732.00" fill="#2c4e8b"/><polygon points="363.36,732.00 393.96,732.00 403.96,725.70 373.36,725.70" fill="#3560ad"/><polygon points="441.49,909.40 472.09,909.40 472.09,730.00 441.49,730.00" fill="#4472c4"/><polygon points="472.09,909.40 482.09,903.10 482.09,723.70 472.09,730.00" fill="#2c4e8b"/><polygon points="441.49,730.00 472.09,730.00 482.09,723.70 451.49,723.70" fill="#3560ad"/><polygon points="519.62,909.40 550.22,909.40 550.22,723.85 519.62,723.85" fill="#4472c4"/><polygon points="550.22,909.40 560.22,903.10 560.22,717.55 550.22,723.85" fill="#2c4e8b"/><polygon points="519.62,723.85 550.22,723.85 560.22,717.55 529.62,717.55" fill="#3560ad"/><polygon points="597.75,909.40 628.35,909.40 628.35,722.32 597.75,722.32" fill="#4472c4"/><polygon points="628.35,909.40 638.35,903.10 638.35,716.02 628.35,722.32" fill="#2c4e8b"/><polygon points="597.75,722.32 628.35,722.32 638.35,716.02 607.75,716.02" fill="#3560ad"/><polygon points="675.88,909.40 706.48,909.40 706.48,730.77 675.88,730.77" fill="#4472c4"/><polygon points="706.48,909.40 716.48,903.10 716.48,724.47 706.48,730.77" fill="#2c4e8b"/><polygon points="675.88,730.77 706.48,730.77 716.48,724.47 685.88,724.47" fill="#3560ad"/><polygon points="754.01,909.40 784.61,909.40 784.61,733.08 754.01,733.08" fill="#4472c4"/><polygon points="784.61,909.40 794.61,903.10 794.61,726.78 784.61,733.08" fill="#2c4e8b"/><polygon points="754.01,733.08 784.61,733.08 794.61,726.78 764.01,726.78" fill="#3560ad"/><polygon points="832.14,909.40 862.74,909.40 862.74,743.99 832.14,743.99" fill="#4472c4"/><polygon points="862.74,909.40 872.74,903.10 872.74,737.69 862.74,743.99" fill="#2c4e8b"/><polygon points="832.14,743.99 862.74,743.99 872.74,737.69 842.14,737.69" fill="#3560ad"/><polygon points="910.27,909.40 940.87,909.40 940.87,743.83 910.27,743.83" fill="#4472c4"/><polygon points="940.87,909.40 950.87,903.10 950.87,737.53 940.87,743.83" fill="#2c4e8b"/><polygon points="910.27,743.83 940.87,743.83 950.87,737.53 920.27,737.53" fill="#3560ad"/><polygon points="988.40,909.40 1019.00,909.40 1019.00,730.00 988.40,730.00" fill="#4472c4"/><polygon points="1019.00,909.40 1029.00,903.10 1029.00,723.70 1019.00,730.00" fill="#2c4e8b"/><polygon points="988.40,730.00 1019.00,730.00 1029.00,723.70 998.40,723.70" fill="#3560ad"/><polygon points="1066.53,909.40 1097.13,909.40 1097.13,730.00 1066.53,730.00" fill="#4472c4"/><polygon points="1097.13,909.40 1107.13,903.10 1107.13,723.70 1097.13,730.00" fill="#2c4e8b"/><polygon points="1066.53,730.00 1097.13,730.00 1107.13,723.70 1076.53,723.70" fill="#3560ad"/><polygon points="1144.66,909.40 1175.26,909.40 1175.26,730.00 1144.66,730.00" fill="#4472c4"/><polygon points="1175.26,909.40 1185.26,903.10 1185.26,723.70 1175.26,730.00" fill="#2c4e8b"/><polygon points="1144.66,730.00 1175.26,730.00 1185.26,723.70 1154.66,723.70" fill="#3560ad"/><polygon points="1222.79,909.40 1253.39,909.40 1253.39,733.08 1222.79,733.08" fill="#4472c4"/><polygon points="1253.39,909.40 1263.39,903.10 1263.39,726.78 1253.39,733.08" fill="#2c4e8b"/><polygon points="1222.79,733.08 1253.39,733.08 1263.39,726.78 1232.79,726.78" fill="#3560ad"/><polygon points="1300.92,909.40 1331.52,909.40 1341.52,903.10 1310.92,903.10" fill="#2c4e8b"/><polygon points="1379.05,909.40 1409.65,909.40 1419.65,903.10 1389.05,903.10" fill="#2c4e8b"/><polygon points="1457.18,909.40 1487.78,909.40 1497.78,903.10 1467.18,903.10" fill="#2c4e8b"/><polygon points="1535.31,909.40 1565.91,909.40 1575.91,903.10 1545.31,903.10" fill="#2c4e8b"/><polygon points="1613.44,909.40 1644.04,909.40 1654.04,903.10 1623.44,903.10" fill="#2c4e8b"/><polygon points="1691.57,909.40 1722.17,909.40 1732.17,903.10 1701.57,903.10" fill="#2c4e8b"/></svg>
<div class="t" style="left:821.50px;top:320.46px;font-size:16.28px;color:#595959;transform:scaleX(1.0120);">Total Expenses vs Previous Year</div>
<div class="r" style="left:1179.00px;top:336.00px;width:4.70px;height:5.60px;background:#4472c4;"></div>
<div class="t" style="left:1187.80px;top:334.08px;font-size:10.61px;color:#595959;transform:scaleX(1.0119);">Year Posted</div>
<div class="r" style="left:1305.30px;top:336.00px;width:5.70px;height:5.60px;background:#a5a5a5;"></div>
<div class="t" style="left:1315.40px;top:334.08px;font-size:10.61px;color:#595959;transform:scaleX(1.0097);">Year Previous</div>
<div class="t" style="left:96.61px;top:540.68px;font-size:10.03px;color:#595959;transform:scaleX(1.0954);">£0.00</div>
<div class="t" style="left:69.12px;top:516.32px;font-size:10.03px;color:#595959;transform:scaleX(1.0954);">£10,000.00</div>
<div class="t" style="left:69.12px;top:491.96px;font-size:10.03px;color:#595959;transform:scaleX(1.0954);">£20,000.00</div>
<div class="t" style="left:69.12px;top:467.60px;font-size:10.03px;color:#595959;transform:scaleX(1.0954);">£30,000.00</div>
<div class="t" style="left:69.12px;top:443.24px;font-size:10.03px;color:#595959;transform:scaleX(1.0954);">£40,000.00</div>
<div class="t" style="left:69.12px;top:418.88px;font-size:10.03px;color:#595959;transform:scaleX(1.0954);">£50,000.00</div>
<div class="t" style="left:1769.00px;top:513.03px;font-size:10.32px;color:#595959;transform:scaleX(1.0444);">Year Previous</div>
<div class="t" style="left:1742.00px;top:531.43px;font-size:10.32px;color:#595959;transform:scaleX(1.0386);">Year Posted</div>
<div class="t" style="left:183.21px;top:391.42px;font-size:10.32px;font-weight:bold;color:#262626;transform:scaleX(1.0570);">£46,500.00</div>
<div class="t" style="left:156.11px;top:435.98px;font-size:10.32px;font-weight:bold;color:#262626;transform:scaleX(1.0570);">£35,828.00</div>
<div class="t" style="left:262.16px;top:388.77px;font-size:10.32px;font-weight:bold;color:#262626;transform:scaleX(1.0570);">£47,600.00</div>
<div class="t" style="left:235.06px;top:435.49px;font-size:10.32px;font-weight:bold;color:#262626;transform:scaleX(1.0570);">£36,028.00</div>
<div class="t" style="left:341.11px;top:388.77px;font-size:10.32px;font-weight:bold;color:#262626;transform:scaleX(1.0570);">£47,600.00</div>
<div class="t" style="left:314.01px;top:435.42px;font-size:10.32px;font-weight:bold;color:#262626;transform:scaleX(1.0570);">£36,058.00</div>
<div class="t" style="left:420.06px;top:388.77px;font-size:10.32px;font-weight:bold;color:#262626;transform:scaleX(1.0570);">£47,600.00</div>
<div class="t" style="left:392.96px;top:435.73px;font-size:10.32px;font-weight:bold;color:#262626;transform:scaleX(1.0570);">£35,928.00</div>
<div class="t" style="left:499.01px;top:388.53px;font-size:10.32px;font-weight:bold;color:#262626;transform:scaleX(1.0570);">£47,700.00</div>
<div class="t" style="left:471.91px;top:436.46px;font-size:10.32px;font-weight:bold;color:#262626;transform:scaleX(1.0570);">£35,628.00</div>
<div class="t" style="left:577.96px;top:388.53px;font-size:10.32px;font-weight:bold;color:#262626;transform:scaleX(1.0570);">£47,700.00</div>
<div class="t" style="left:550.86px;top:436.70px;font-size:10.32px;font-weight:bold;color:#262626;transform:scaleX(1.0570);">£35,528.00</div>
<div class="t" style="left:656.91px;top:388.65px;font-size:10.32px;font-weight:bold;color:#262626;transform:scaleX(1.0570);">£47,650.00</div>
<div class="t" style="left:629.81px;top:435.49px;font-size:10.32px;font-weight:bold;color:#262626;transform:scaleX(1.0570);">£36,028.00</div>
<div class="t" style="left:735.86px;top:388.77px;font-size:10.32px;font-weight:bold;color:#262626;transform:scaleX(1.0570);">£47,600.00</div>
<div class="t" style="left:708.76px;top:435.25px;font-size:10.32px;font-weight:bold;color:#262626;transform:scaleX(1.0570);">£36,128.00</div>
<div class="t" style="left:814.81px;top:390.46px;font-size:10.32px;font-weight:bold;color:#262626;transform:scaleX(1.0570);">£46,900.00</div>
<div class="t" style="left:787.71px;top:435.23px;font-size:10.32px;font-weight:bold;color:#262626;transform:scaleX(1.0570);">£36,138.00</div>
<div class="t" style="left:893.76px;top:390.22px;font-size:10.32px;font-weight:bold;color:#262626;transform:scaleX(1.0570);">£47,000.00</div>
<div class="t" style="left:866.66px;top:435.01px;font-size:10.32px;font-weight:bold;color:#262626;transform:scaleX(1.0570);">£36,228.00</div>
<div class="t" style="left:972.71px;top:389.25px;font-size:10.32px;font-weight:bold;color:#262626;transform:scaleX(1.0570);">£47,400.00</div>
<div class="t" style="left:945.61px;top:436.22px;font-size:10.32px;font-weight:bold;color:#262626;transform:scaleX(1.0570);">£35,728.00</div>
<div class="t" style="left:1051.66px;top:388.53px;font-size:10.32px;font-weight:bold;color:#262626;transform:scaleX(1.0570);">£47,700.00</div>
<div class="t" style="left:1024.56px;top:435.49px;font-size:10.32px;font-weight:bold;color:#262626;transform:scaleX(1.0570);">£36,028.00</div>
<div class="t" style="left:1130.61px;top:388.53px;font-size:10.32px;font-weight:bold;color:#262626;transform:scaleX(1.0570);">£47,700.00</div>
<div class="t" style="left:1103.51px;top:435.49px;font-size:10.32px;font-weight:bold;color:#262626;transform:scaleX(1.0570);">£36,028.00</div>
<div class="t" style="left:1209.56px;top:389.01px;font-size:10.32px;font-weight:bold;color:#262626;transform:scaleX(1.0570);">£47,500.00</div>
<div class="t" style="left:1182.46px;top:435.49px;font-size:10.32px;font-weight:bold;color:#262626;transform:scaleX(1.0570);">£36,028.00</div>
<div class="t" style="left:1302.15px;top:504.63px;font-size:10.32px;font-weight:bold;color:#262626;transform:scaleX(1.0570);">£0.00</div>
<div class="t" style="left:1275.05px;top:522.73px;font-size:10.32px;font-weight:bold;color:#262626;transform:scaleX(1.0570);">£0.00</div>
<div class="t" style="left:1381.10px;top:504.63px;font-size:10.32px;font-weight:bold;color:#262626;transform:scaleX(1.0570);">£0.00</div>
<div class="t" style="left:1354.00px;top:522.73px;font-size:10.32px;font-weight:bold;color:#262626;transform:scaleX(1.0570);">£0.00</div>
<div class="t" style="left:1460.05px;top:504.63px;font-size:10.32px;font-weight:bold;color:#262626;transform:scaleX(1.0570);">£0.00</div>
<div class="t" style="left:1432.95px;top:522.73px;font-size:10.32px;font-weight:bold;color:#262626;transform:scaleX(1.0570);">£0.00</div>
<div class="t" style="left:1539.00px;top:504.63px;font-size:10.32px;font-weight:bold;color:#262626;transform:scaleX(1.0570);">£0.00</div>
<div class="t" style="left:1511.90px;top:522.73px;font-size:10.32px;font-weight:bold;color:#262626;transform:scaleX(1.0570);">£0.00</div>
<div class="t" style="left:1617.95px;top:504.63px;font-size:10.32px;font-weight:bold;color:#262626;transform:scaleX(1.0570);">£0.00</div>
<div class="t" style="left:1590.85px;top:522.73px;font-size:10.32px;font-weight:bold;color:#262626;transform:scaleX(1.0570);">£0.00</div>
<div class="t" style="left:1696.90px;top:504.63px;font-size:10.32px;font-weight:bold;color:#262626;transform:scaleX(1.0570);">£0.00</div>
<div class="t" style="left:1669.80px;top:522.73px;font-size:10.32px;font-weight:bold;color:#262626;transform:scaleX(1.0570);">£0.00</div>
<div class="r" style="left:55.70px;top:568.30px;width:6.40px;height:5.70px;background:#4472c4;"></div>
<div class="t" style="left:65.30px;top:565.83px;font-size:10.32px;color:#595959;transform:scaleX(1.0332);">Year Posted</div>
<div class="r" style="left:55.70px;top:585.70px;width:6.40px;height:5.70px;background:#a5a5a5;"></div>
<div class="t" style="left:65.30px;top:583.23px;font-size:10.32px;color:#595959;transform:scaleX(1.0428);">Year Previous</div>
<div class="t" style="left:144.66px;top:551.43px;font-size:10.32px;color:#595959;transform:scaleX(1.0522);">Aug 26 2022</div>
<div class="t" style="left:147.54px;top:565.83px;font-size:10.32px;color:#595959;transform:scaleX(1.0810);">£35,828.00</div>
<div class="t" style="left:147.54px;top:583.23px;font-size:10.32px;color:#595959;transform:scaleX(1.0810);">£46,500.00</div>
<div class="t" style="left:223.57px;top:551.43px;font-size:10.32px;color:#595959;transform:scaleX(1.0522);">Sep 30 2022</div>
<div class="t" style="left:226.45px;top:565.83px;font-size:10.32px;color:#595959;transform:scaleX(1.0810);">£36,028.00</div>
<div class="t" style="left:226.45px;top:583.23px;font-size:10.32px;color:#595959;transform:scaleX(1.0810);">£47,600.00</div>
<div class="t" style="left:303.70px;top:551.43px;font-size:10.32px;color:#595959;transform:scaleX(1.0522);">Oct 28 2022</div>
<div class="t" style="left:305.36px;top:565.83px;font-size:10.32px;color:#595959;transform:scaleX(1.0810);">£36,058.00</div>
<div class="t" style="left:305.36px;top:583.23px;font-size:10.32px;color:#595959;transform:scaleX(1.0810);">£47,600.00</div>
<div class="t" style="left:381.40px;top:551.43px;font-size:10.32px;color:#595959;transform:scaleX(1.0522);">Nov 25 2022</div>
<div class="t" style="left:384.27px;top:565.83px;font-size:10.32px;color:#595959;transform:scaleX(1.0810);">£35,928.00</div>
<div class="t" style="left:384.27px;top:583.23px;font-size:10.32px;color:#595959;transform:scaleX(1.0810);">£47,600.00</div>
<div class="t" style="left:460.31px;top:551.43px;font-size:10.32px;color:#595959;transform:scaleX(1.0522);">Dec 30 2022</div>
<div class="t" style="left:463.18px;top:565.83px;font-size:10.32px;color:#595959;transform:scaleX(1.0810);">£35,628.00</div>
<div class="t" style="left:463.18px;top:583.23px;font-size:10.32px;color:#595959;transform:scaleX(1.0810);">£47,700.00</div>
<div class="t" style="left:540.12px;top:551.43px;font-size:10.32px;color:#595959;transform:scaleX(1.0522);">Jan 27 2023</div>
<div class="t" style="left:542.09px;top:565.83px;font-size:10.32px;color:#595959;transform:scaleX(1.0810);">£35,528.00</div>
<div class="t" style="left:542.09px;top:583.23px;font-size:10.32px;color:#595959;transform:scaleX(1.0810);">£47,700.00</div>
<div class="t" style="left:618.43px;top:551.43px;font-size:10.32px;color:#595959;transform:scaleX(1.0522);">Feb 24 2023</div>
<div class="t" style="left:621.00px;top:565.83px;font-size:10.32px;color:#595959;transform:scaleX(1.0810);">£36,028.00</div>
<div class="t" style="left:621.00px;top:583.23px;font-size:10.32px;color:#595959;transform:scaleX(1.0810);">£47,650.00</div>
<div class="t" style="left:697.34px;top:551.43px;font-size:10.32px;color:#595959;transform:scaleX(1.0522);">Mar 31 2023</div>
<div class="t" style="left:699.91px;top:565.83px;font-size:10.32px;color:#595959;transform:scaleX(1.0810);">£36,128.00</div>
<div class="t" style="left:699.91px;top:583.23px;font-size:10.32px;color:#595959;transform:scaleX(1.0810);">£47,600.00</div>
<div class="t" style="left:774.74px;top:551.43px;font-size:10.32px;color:#595959;transform:scaleX(1.0522);">April 28 2023</div>
<div class="t" style="left:778.82px;top:565.83px;font-size:10.32px;color:#595959;transform:scaleX(1.0810);">£36,138.00</div>
<div class="t" style="left:778.82px;top:583.23px;font-size:10.32px;color:#595959;transform:scaleX(1.0810);">£46,900.00</div>
<div class="t" style="left:854.26px;top:551.43px;font-size:10.32px;color:#595959;transform:scaleX(1.0522);">May 26 2023</div>
<div class="t" style="left:857.73px;top:565.83px;font-size:10.32px;color:#595959;transform:scaleX(1.0810);">£36,228.00</div>
<div class="t" style="left:857.73px;top:583.23px;font-size:10.32px;color:#595959;transform:scaleX(1.0810);">£47,000.00</div>
<div class="t" style="left:931.65px;top:551.43px;font-size:10.32px;color:#595959;transform:scaleX(1.0522);">June 30 2023</div>
<div class="t" style="left:936.64px;top:565.83px;font-size:10.32px;color:#595959;transform:scaleX(1.0810);">£35,728.00</div>
<div class="t" style="left:936.64px;top:583.23px;font-size:10.32px;color:#595959;transform:scaleX(1.0810);">£47,400.00</div>
<div class="t" style="left:1012.68px;top:551.43px;font-size:10.32px;color:#595959;transform:scaleX(1.0522);">July 28 2023</div>
<div class="t" style="left:1015.55px;top:565.83px;font-size:10.32px;color:#595959;transform:scaleX(1.0810);">£36,028.00</div>
<div class="t" style="left:1015.55px;top:583.23px;font-size:10.32px;color:#595959;transform:scaleX(1.0810);">£47,700.00</div>
<div class="t" style="left:1091.58px;top:551.43px;font-size:10.32px;color:#595959;transform:scaleX(1.0522);">Aug 25 2023</div>
<div class="t" style="left:1094.46px;top:565.83px;font-size:10.32px;color:#595959;transform:scaleX(1.0810);">£36,028.00</div>
<div class="t" style="left:1094.46px;top:583.23px;font-size:10.32px;color:#595959;transform:scaleX(1.0810);">£47,700.00</div>
<div class="t" style="left:1170.49px;top:551.43px;font-size:10.32px;color:#595959;transform:scaleX(1.0522);">Sep 29 2023</div>
<div class="t" style="left:1173.37px;top:565.83px;font-size:10.32px;color:#595959;transform:scaleX(1.0810);">£36,028.00</div>
<div class="t" style="left:1173.37px;top:583.23px;font-size:10.32px;color:#595959;transform:scaleX(1.0810);">£47,500.00</div>
<div class="t" style="left:1250.62px;top:551.43px;font-size:10.32px;color:#595959;transform:scaleX(1.0522);">Oct 27 2023</div>
<div class="t" style="left:1266.24px;top:565.83px;font-size:10.32px;color:#595959;transform:scaleX(1.0810);">£0.00</div>
<div class="t" style="left:1266.24px;top:583.23px;font-size:10.32px;color:#595959;transform:scaleX(1.0810);">£0.00</div>
<div class="t" style="left:1328.32px;top:551.43px;font-size:10.32px;color:#595959;transform:scaleX(1.0522);">Nov 24 2023</div>
<div class="t" style="left:1345.15px;top:565.83px;font-size:10.32px;color:#595959;transform:scaleX(1.0810);">£0.00</div>
<div class="t" style="left:1345.15px;top:583.23px;font-size:10.32px;color:#595959;transform:scaleX(1.0810);">£0.00</div>
<div class="t" style="left:1407.23px;top:551.43px;font-size:10.32px;color:#595959;transform:scaleX(1.0522);">Dec 29 2023</div>
<div class="t" style="left:1424.06px;top:565.83px;font-size:10.32px;color:#595959;transform:scaleX(1.0810);">£0.00</div>
<div class="t" style="left:1424.06px;top:583.23px;font-size:10.32px;color:#595959;transform:scaleX(1.0810);">£0.00</div>
<div class="t" style="left:1487.04px;top:551.43px;font-size:10.32px;color:#595959;transform:scaleX(1.0522);">Jan 26 2024</div>
<div class="t" style="left:1502.97px;top:565.83px;font-size:10.32px;color:#595959;transform:scaleX(1.0810);">£0.00</div>
<div class="t" style="left:1502.97px;top:583.23px;font-size:10.32px;color:#595959;transform:scaleX(1.0810);">£0.00</div>
<div class="t" style="left:1565.35px;top:551.43px;font-size:10.32px;color:#595959;transform:scaleX(1.0522);">Feb 23 2024</div>
<div class="t" style="left:1581.88px;top:565.83px;font-size:10.32px;color:#595959;transform:scaleX(1.0810);">£0.00</div>
<div class="t" style="left:1581.88px;top:583.23px;font-size:10.32px;color:#595959;transform:scaleX(1.0810);">£0.00</div>
<div class="t" style="left:1644.26px;top:551.43px;font-size:10.32px;color:#595959;transform:scaleX(1.0522);">Mar 29 2023</div>
<div class="t" style="left:1660.79px;top:565.83px;font-size:10.32px;color:#595959;transform:scaleX(1.0810);">£0.00</div>
<div class="t" style="left:1660.79px;top:583.23px;font-size:10.32px;color:#595959;transform:scaleX(1.0810);">£0.00</div>
<div class="t" style="left:877.90px;top:644.69px;font-size:16.72px;color:#595959;transform:scaleX(0.9462);">Expenses Savngs</div>
<div class="t" style="left:136.21px;top:910.88px;font-size:10.03px;color:#595959;transform:scaleX(1.0954);">£0.00</div>
<div class="t" style="left:114.83px;top:880.09px;font-size:10.03px;color:#595959;transform:scaleX(1.0954);">£2,000.00</div>
<div class="t" style="left:114.83px;top:849.30px;font-size:10.03px;color:#595959;transform:scaleX(1.0954);">£4,000.00</div>
<div class="t" style="left:114.83px;top:818.51px;font-size:10.03px;color:#595959;transform:scaleX(1.0954);">£6,000.00</div>
<div class="t" style="left:114.83px;top:787.72px;font-size:10.03px;color:#595959;transform:scaleX(1.0954);">£8,000.00</div>
<div class="t" style="left:108.72px;top:756.93px;font-size:10.03px;color:#595959;transform:scaleX(1.0954);">£10,000.00</div>
<div class="t" style="left:108.72px;top:726.14px;font-size:10.03px;color:#595959;transform:scaleX(1.0954);">£12,000.00</div>
<div class="t" style="left:108.72px;top:695.35px;font-size:10.03px;color:#595959;transform:scaleX(1.0954);">£14,000.00</div>
<div class="t" style="left:195.11px;top:729.60px;font-size:10.32px;font-weight:bold;color:#262626;transform:scaleX(1.0570);">£10,672.00</div>
<div class="t" style="left:183.01px;top:925.13px;font-size:10.32px;color:#595959;transform:scaleX(1.0522);">Aug 26 2022</div>
<div class="t" style="left:273.54px;top:715.77px;font-size:10.32px;font-weight:bold;color:#262626;transform:scaleX(1.0570);">£11,572.00</div>
<div class="t" style="left:261.14px;top:925.13px;font-size:10.32px;color:#595959;transform:scaleX(1.0522);">Sep 30 2022</div>
<div class="t" style="left:351.67px;top:716.23px;font-size:10.32px;font-weight:bold;color:#262626;transform:scaleX(1.0570);">£11,542.00</div>
<div class="t" style="left:340.48px;top:925.13px;font-size:10.32px;color:#595959;transform:scaleX(1.0522);">Oct 28 2022</div>
<div class="t" style="left:429.80px;top:714.23px;font-size:10.32px;font-weight:bold;color:#262626;transform:scaleX(1.0570);">£11,672.00</div>
<div class="t" style="left:417.40px;top:925.13px;font-size:10.32px;color:#595959;transform:scaleX(1.0522);">Nov 25 2022</div>
<div class="t" style="left:507.63px;top:708.08px;font-size:10.32px;font-weight:bold;color:#262626;transform:scaleX(1.0570);">£12,072.00</div>
<div class="t" style="left:495.53px;top:925.13px;font-size:10.32px;color:#595959;transform:scaleX(1.0522);">Dec 30 2022</div>
<div class="t" style="left:585.76px;top:706.54px;font-size:10.32px;font-weight:bold;color:#262626;transform:scaleX(1.0570);">£12,172.00</div>
<div class="t" style="left:574.57px;top:925.13px;font-size:10.32px;color:#595959;transform:scaleX(1.0522);">Jan 27 2023</div>
<div class="t" style="left:664.19px;top:715.00px;font-size:10.32px;font-weight:bold;color:#262626;transform:scaleX(1.0570);">£11,622.00</div>
<div class="t" style="left:652.09px;top:925.13px;font-size:10.32px;color:#595959;transform:scaleX(1.0522);">Feb 24 2023</div>
<div class="t" style="left:742.32px;top:717.30px;font-size:10.32px;font-weight:bold;color:#262626;transform:scaleX(1.0570);">£11,472.00</div>
<div class="t" style="left:730.23px;top:925.13px;font-size:10.32px;color:#595959;transform:scaleX(1.0522);">Mar 31 2023</div>
<div class="t" style="left:820.15px;top:728.22px;font-size:10.32px;font-weight:bold;color:#262626;transform:scaleX(1.0570);">£10,762.00</div>
<div class="t" style="left:806.85px;top:925.13px;font-size:10.32px;color:#595959;transform:scaleX(1.0522);">April 28 2023</div>
<div class="t" style="left:898.28px;top:728.06px;font-size:10.32px;font-weight:bold;color:#262626;transform:scaleX(1.0570);">£10,772.00</div>
<div class="t" style="left:885.58px;top:925.13px;font-size:10.32px;color:#595959;transform:scaleX(1.0522);">May 26 2023</div>
<div class="t" style="left:976.71px;top:714.23px;font-size:10.32px;font-weight:bold;color:#262626;transform:scaleX(1.0570);">£11,672.00</div>
<div class="t" style="left:962.20px;top:925.13px;font-size:10.32px;color:#595959;transform:scaleX(1.0522);">June 30 2023</div>
<div class="t" style="left:1054.84px;top:714.23px;font-size:10.32px;font-weight:bold;color:#262626;transform:scaleX(1.0570);">£11,672.00</div>
<div class="t" style="left:1042.44px;top:925.13px;font-size:10.32px;color:#595959;transform:scaleX(1.0522);">July 28 2023</div>
<div class="t" style="left:1132.97px;top:714.23px;font-size:10.32px;font-weight:bold;color:#262626;transform:scaleX(1.0570);">£11,672.00</div>
<div class="t" style="left:1120.57px;top:925.13px;font-size:10.32px;color:#595959;transform:scaleX(1.0522);">Aug 25 2023</div>
<div class="t" style="left:1211.10px;top:717.30px;font-size:10.32px;font-weight:bold;color:#262626;transform:scaleX(1.0570);">£11,472.00</div>
<div class="t" style="left:1198.70px;top:925.13px;font-size:10.32px;color:#595959;transform:scaleX(1.0522);">Sep 29 2023</div>
<div class="t" style="left:1302.57px;top:893.03px;font-size:10.32px;font-weight:bold;color:#262626;transform:scaleX(1.0570);">£0.00</div>
<div class="t" style="left:1278.04px;top:925.13px;font-size:10.32px;color:#595959;transform:scaleX(1.0522);">Oct 27 2023</div>
<div class="t" style="left:1380.70px;top:893.03px;font-size:10.32px;font-weight:bold;color:#262626;transform:scaleX(1.0570);">£0.00</div>
<div class="t" style="left:1354.96px;top:925.13px;font-size:10.32px;color:#595959;transform:scaleX(1.0522);">Nov 24 2023</div>
<div class="t" style="left:1458.83px;top:893.03px;font-size:10.32px;font-weight:bold;color:#262626;transform:scaleX(1.0570);">£0.00</div>
<div class="t" style="left:1433.09px;top:925.13px;font-size:10.32px;color:#595959;transform:scaleX(1.0522);">Dec 29 2023</div>
<div class="t" style="left:1536.96px;top:893.03px;font-size:10.32px;font-weight:bold;color:#262626;transform:scaleX(1.0570);">£0.00</div>
<div class="t" style="left:1512.13px;top:925.13px;font-size:10.32px;color:#595959;transform:scaleX(1.0522);">Jan 26 2024</div>
<div class="t" style="left:1615.09px;top:893.03px;font-size:10.32px;font-weight:bold;color:#262626;transform:scaleX(1.0570);">£0.00</div>
<div class="t" style="left:1589.65px;top:925.13px;font-size:10.32px;color:#595959;transform:scaleX(1.0522);">Feb 23 2024</div>
<div class="t" style="left:1693.22px;top:893.03px;font-size:10.32px;font-weight:bold;color:#262626;transform:scaleX(1.0570);">£0.00</div>
<div class="t" style="left:1667.79px;top:925.13px;font-size:10.32px;color:#595959;transform:scaleX(1.0522);">Mar 29 2023</div>
<div class="r" style="left:0.00px;top:966.50px;width:1900.00px;height:25.70px;background:#f5f5f5;"></div>
<div class="r" style="left:0.00px;top:992.20px;width:1900.00px;height:22.80px;background:#efefef;"></div>
<svg style="left:24px;top:972px" width="42" height="14" viewBox="0 0 42 14">
<path d="M9 2.5 L5 7 L9 11.5" fill="none" stroke="#c2c2c2" stroke-width="1.5"/>
<path d="M33 2.5 L37 7 L33 11.5" fill="none" stroke="#b0b0b0" stroke-width="1.5"/></svg>
<div class="r" style="left:101.50px;top:968.50px;width:1.00px;height:21.00px;background:#c8c8c8;"></div>
<div class="r" style="left:104.70px;top:968.60px;width:105.00px;height:20.00px;background:#262626;outline:1px solid #cfcfcf;"></div>
<div class="t" style="left:116.20px;top:967.75px;font-size:15.12px;color:#fff;transform:scaleX(1.0927);-webkit-text-stroke:0.05px currentColor;">Dashboard</div>
<div class="r" style="left:214.70px;top:968.60px;width:207.10px;height:20.00px;background:#2c53a0;outline:1px solid #cfcfcf;"></div>
<div class="t" style="left:229.00px;top:967.75px;font-size:15.12px;color:#fff;transform:scaleX(1.1049);-webkit-text-stroke:0.05px currentColor;">Team Finance Template</div>
<div class="r" style="left:424.60px;top:966.50px;width:234.10px;height:22.00px;background:linear-gradient(#ffffff,#fafafa 60%,#d9d9d9);border-left:1px solid #cfcfcf;border-right:1px solid #cfcfcf;box-sizing:border-box;"></div>
<div class="r" style="left:424.60px;top:987.60px;width:234.10px;height:2.00px;background:#217346;"></div>
<div class="t" style="left:436.40px;top:968.05px;font-size:15.12px;font-weight:bold;color:#1e6b3c;transform:scaleX(1.0802);-webkit-text-stroke:0px currentColor;">Monthly Project Fanancials</div>
<div class="r" style="left:662.40px;top:968.60px;width:168.60px;height:20.00px;background:#8497b0;outline:1px solid #cfcfcf;"></div>
<div class="t" style="left:674.70px;top:967.75px;font-size:15.12px;color:#1b2636;transform:scaleX(1.1055);-webkit-text-stroke:0.05px currentColor;">History Percentage</div>
<div class="r" style="left:836.40px;top:968.60px;width:121.00px;height:20.00px;background:#c55a11;outline:1px solid #cfcfcf;"></div>
<div class="t" style="left:848.40px;top:967.75px;font-size:15.12px;color:#fff;transform:scaleX(1.0927);-webkit-text-stroke:0.05px currentColor;">Futures Pivot</div>
<div class="r" style="left:960.00px;top:968.50px;width:1.00px;height:21.00px;background:#c8c8c8;"></div>
<svg style="left:992px;top:968px" width="22" height="22" viewBox="0 0 22 22">
<circle cx="11" cy="11" r="9" fill="none" stroke="#555" stroke-width="1.4"/>
<path d="M11 6 V16 M6 11 H16" stroke="#555" stroke-width="1.5"/></svg>
<div class="r" style="left:1124.00px;top:967.00px;width:1.00px;height:1.00px;background:#efefef;"></div>
<div class="r" style="left:1137.20px;top:973.20px;width:2.20px;height:2.20px;background:#7a7a7a;border-radius:50%;"></div>
<div class="r" style="left:1137.20px;top:977.80px;width:2.20px;height:2.20px;background:#7a7a7a;border-radius:50%;"></div>
<div class="r" style="left:1137.20px;top:982.40px;width:2.20px;height:2.20px;background:#7a7a7a;border-radius:50%;"></div>
<svg style="left:1157px;top:972px" width="12" height="14" viewBox="0 0 12 14"><path d="M10 1.3 V10.8 L2.2 6 Z" fill="#606060" stroke="#606060" stroke-width="0.8" stroke-linejoin="round"/></svg>
<div class="r" style="left:1202.40px;top:973.00px;width:597.00px;height:9.80px;background:#6e6e6e;border-radius:5px;"></div>
<svg style="left:1860px;top:972px" width="12" height="14" viewBox="0 0 12 14"><path d="M2 1.5 V12.5 L10 7 Z" fill="#606060"/></svg>
<div class="r" style="left:1875.00px;top:130.50px;width:25.00px;height:836.00px;background:#f5f5f5;"></div>
<svg style="left:1880px;top:134px" width="15" height="10" viewBox="0 0 15 10"><path d="M1.5 8.5 L7.5 1.5 L13.5 8.5 Z" fill="#606060"/></svg>
<div class="r" style="left:1882.00px;top:162.50px;width:11.00px;height:590.00px;background:#404040;border-radius:5.5px;"></div>
<svg style="left:1880px;top:954px" width="15" height="10" viewBox="0 0 15 10"><path d="M1.5 1.5 L7.5 8.5 L13.5 1.5 Z" fill="#606060"/></svg>
<div class="t" style="left:9.50px;top:998.68px;font-size:13.08px;color:#333;transform:scaleX(0.9177);-webkit-text-stroke:0.1px currentColor;">Ready</div>
<svg style="left:68px;top:996px" width="21" height="17" viewBox="0 0 21 17">
<rect x="1.5" y="1.5" width="16" height="13" fill="none" stroke="#444" stroke-width="1.4"/>
<line x1="1.5" y1="4.5" x2="17.5" y2="4.5" stroke="#444" stroke-width="1.3"/>
<path d="M4 7 H7 M4 10 H6" stroke="#444" stroke-width="1.2"/>
<circle cx="13.5" cy="11" r="4.5" fill="#efefef" stroke="#444" stroke-width="1.4"/><circle cx="13.5" cy="11" r="1.8" fill="#444"/></svg>
<svg style="left:107px;top:995px" width="21" height="19" viewBox="0 0 21 19">
<circle cx="10" cy="3" r="2" fill="none" stroke="#444" stroke-width="1.3"/>
<path d="M2 6 Q10 9 18 6 M10 8 V12 L5 17 M10 12 L12 14" fill="none" stroke="#444" stroke-width="1.3"/>
<path d="M13 12 L19 18 M19 12 L13 18" stroke="#444" stroke-width="1.3"/></svg>
<div class="t" style="left:130.50px;top:998.68px;font-size:13.08px;color:#333;transform:scaleX(0.9628);-webkit-text-stroke:0.1px currentColor;">Accessibility: Investigate</div>
<div class="r" style="left:1532.00px;top:993.00px;width:49.00px;height:22.00px;background:#dcdcdc;"></div>
<svg style="left:1546px;top:995px" width="20" height="17" viewBox="0 0 20 17">
<rect x="2" y="1.5" width="16" height="14" fill="none" stroke="#333" stroke-width="1.5"/>
<path d="M7.3 1.5 V15.5 M12.7 1.5 V15.5 M2 6.2 H18 M2 10.8 H18" stroke="#333" stroke-width="1.4"/></svg>
<svg style="left:1596px;top:995px" width="20" height="17" viewBox="0 0 20 17">
<rect x="1.5" y="1.5" width="17" height="14" fill="none" stroke="#333" stroke-width="1.5"/>
<rect x="5.5" y="4" width="9" height="9" fill="none" stroke="#333" stroke-width="1.2"/>
<path d="M7 6.5 H13 M7 9 H13 M7 11 H13" stroke="#333" stroke-width="0.8"/></svg>
<svg style="left:1645px;top:995px" width="20" height="17" viewBox="0 0 20 17">
<rect x="1.5" y="1.5" width="17" height="14" fill="none" stroke="#333" stroke-width="1.5"/>
<path d="M1.5 8.5 H8 V1.5 M12 1.5 V6" fill="none" stroke="#333" stroke-width="1.4"/></svg>
<div class="r" style="left:1687.00px;top:1003.00px;width:9.40px;height:1.60px;background:#444;"></div>
<div class="r" style="left:1703.00px;top:1004.00px;width:123.30px;height:1.00px;background:#777;"></div>
<div class="r" style="left:1750.50px;top:998.00px;width:5.90px;height:11.80px;background:#555;border-radius:1px;"></div>
<div class="r" style="left:1764.30px;top:1000.50px;width:1.00px;height:7.00px;background:#666;"></div>
<div class="r" style="left:1832.60px;top:1003.00px;width:9.50px;height:1.60px;background:#444;"></div>
<div class="r" style="left:1836.60px;top:999.00px;width:1.60px;height:9.50px;background:#444;"></div>
<div class="t" style="left:1857.90px;top:999.52px;font-size:11.63px;color:#333;transform:scaleX(1.0356);-webkit-text-stroke:0.1px currentColor;">82%</div>
</body></html>
